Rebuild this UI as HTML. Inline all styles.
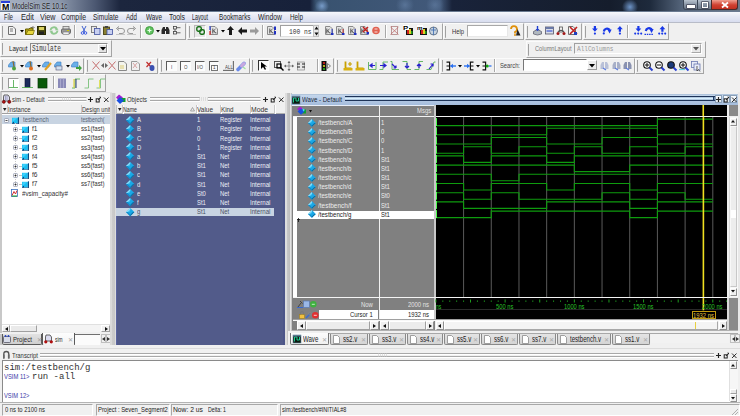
<!DOCTYPE html><html><head><meta charset="utf-8"><style>
html,body{margin:0;padding:0;width:740px;height:416px;overflow:hidden;background:#f0f0f0;}
div{position:absolute;box-sizing:border-box;}
.t{font-family:"Liberation Sans",sans-serif;white-space:nowrap;line-height:1;}
.m{font-family:"Liberation Mono",monospace;white-space:nowrap;line-height:1;}
svg{position:absolute;overflow:visible;}
</style></head><body>
<div style="left:0px;top:0px;width:740px;height:11px;background:radial-gradient(circle 7px at 322px 6px,rgba(140,180,230,0.75),rgba(140,180,230,0) 100%),radial-gradient(circle 8px at 630px 7px,rgba(130,175,235,0.8),rgba(130,175,235,0) 100%),radial-gradient(circle 9px at 405px 5px,rgba(120,150,190,0.45),rgba(120,150,190,0) 100%),radial-gradient(circle 9px at 435px 5px,rgba(120,150,190,0.4),rgba(120,150,190,0) 100%),linear-gradient(90deg,#a8b2c2 0.00%,#8a96aa 8.11%,#4c5872 12.84%,#1c263e 16.22%,#17213a 41.89%,#38526f 42.70%,#42597a 59.46%,#19233a 61.08%,#151d2c 82.43%,#1e2a3c 87.84%,#56667c 92.30%,#6a7888 100.00%);"></div>
<div style="left:0px;top:10.6px;width:740px;height:1px;background:#6a7a90;"></div>
<div style="left:1px;top:1px;width:9px;height:9px;background:#f4f4f4;border-top:2px solid #2a40d8;"></div>
<div class="t" style="left:1.80px;top:3.00px;font-size:8.64px;color:#000;transform:scaleX(1.028);transform-origin:0 0;font-weight:bold;">M</div>
<div class="t" style="left:11.50px;top:2.00px;font-size:8.424px;color:#222;transform:scaleX(0.750);transform-origin:0 0;text-shadow:0 0 2px #d0d8e4;">ModelSim SE 10.1c</div>
<div style="left:683px;top:0px;width:15px;height:10px;background:linear-gradient(#b8c2ce,#8a96a6 50%,#6c7888);border:1px solid #3c4656;border-top:none;border-radius:0 0 0 3px;"></div>
<div style="left:686.5px;top:5px;width:8px;height:2.5px;background:#fff;box-shadow:0 0 0 0.6px #334;"></div>
<div style="left:697px;top:0px;width:15px;height:10px;background:linear-gradient(#b8c2ce,#8a96a6 50%,#6c7888);border:1px solid #3c4656;border-top:none;"></div>
<div style="left:701.5px;top:2px;width:6.5px;height:6px;border:1.5px solid #fff;box-shadow:0 0 0 0.6px #334;"></div>
<div style="left:711px;top:0px;width:27px;height:10px;background:linear-gradient(#f0a090,#d04030 55%,#c03020);border:1px solid #4a2a2a;border-top:none;border-radius:0 0 3px 0;"></div>
<svg style="left:721px;top:2px" width="8" height="6" viewBox="0 0 8 6"><path d="M1,0.5 L7,5.5 M7,0.5 L1,5.5" stroke="#fff" stroke-width="1.8"/></svg>
<div style="left:0px;top:11.6px;width:740px;height:10.6px;background:linear-gradient(#f6f8fc,#e6e9f4 45%,#d8ddef);"></div>
<div style="left:0px;top:22.2px;width:740px;height:0.9px;background:#b8bcc8;"></div>
<div class="t" style="left:4.00px;top:14.00px;font-size:8.208px;color:#1e1e1e;transform:scaleX(0.680);transform-origin:0 0;">File</div>
<div class="t" style="left:21.00px;top:14.00px;font-size:8.208px;color:#1e1e1e;transform:scaleX(0.919);transform-origin:0 0;">Edit</div>
<div class="t" style="left:39.50px;top:14.00px;font-size:8.208px;color:#1e1e1e;transform:scaleX(0.879);transform-origin:0 0;">View</div>
<div class="t" style="left:61.00px;top:14.00px;font-size:8.208px;color:#1e1e1e;transform:scaleX(0.830);transform-origin:0 0;">Compile</div>
<div class="t" style="left:93.00px;top:14.00px;font-size:8.208px;color:#1e1e1e;transform:scaleX(0.799);transform-origin:0 0;">Simulate</div>
<div class="t" style="left:126.00px;top:14.00px;font-size:8.208px;color:#1e1e1e;transform:scaleX(0.753);transform-origin:0 0;">Add</div>
<div class="t" style="left:146.00px;top:14.00px;font-size:8.208px;color:#1e1e1e;transform:scaleX(0.774);transform-origin:0 0;">Wave</div>
<div class="t" style="left:169.00px;top:14.00px;font-size:8.208px;color:#1e1e1e;transform:scaleX(0.835);transform-origin:0 0;">Tools</div>
<div class="t" style="left:192.00px;top:14.00px;font-size:8.208px;color:#1e1e1e;transform:scaleX(0.649);transform-origin:0 0;">Layout</div>
<div class="t" style="left:219.00px;top:14.00px;font-size:8.208px;color:#1e1e1e;transform:scaleX(0.767);transform-origin:0 0;">Bookmarks</div>
<div class="t" style="left:258.00px;top:14.00px;font-size:8.208px;color:#1e1e1e;transform:scaleX(0.822);transform-origin:0 0;">Window</div>
<div class="t" style="left:290.00px;top:14.00px;font-size:8.208px;color:#1e1e1e;transform:scaleX(0.770);transform-origin:0 0;">Help</div>
<div style="left:0px;top:23.3px;width:186.3px;height:17.099999999999998px;border:1px solid #fbfbfb;border-right-color:#a4a4a4;border-bottom-color:#a4a4a4;"></div>
<div style="left:2px;top:25.8px;width:1.3px;height:12.599999999999998px;background:#a0a0a0;border-radius:0 0 0 1px;"></div>
<div style="left:187px;top:23.3px;width:255.5px;height:17.099999999999998px;border:1px solid #fbfbfb;border-right-color:#a4a4a4;border-bottom-color:#a4a4a4;"></div>
<div style="left:189px;top:25.8px;width:1.3px;height:12.599999999999998px;background:#a0a0a0;border-radius:0 0 0 1px;"></div>
<div style="left:443px;top:23.3px;width:81px;height:17.099999999999998px;border:1px solid #fbfbfb;border-right-color:#a4a4a4;border-bottom-color:#a4a4a4;"></div>
<div style="left:445px;top:25.8px;width:1.3px;height:12.599999999999998px;background:#a0a0a0;border-radius:0 0 0 1px;"></div>
<div style="left:524.5px;top:23.3px;width:57.200000000000045px;height:17.099999999999998px;border:1px solid #fbfbfb;border-right-color:#a4a4a4;border-bottom-color:#a4a4a4;"></div>
<div style="left:526.5px;top:25.8px;width:1.3px;height:12.599999999999998px;background:#a0a0a0;border-radius:0 0 0 1px;"></div>
<div style="left:582.5px;top:23.3px;width:86.0px;height:17.099999999999998px;border:1px solid #fbfbfb;border-right-color:#a4a4a4;border-bottom-color:#a4a4a4;"></div>
<div style="left:584.5px;top:25.8px;width:1.3px;height:12.599999999999998px;background:#a0a0a0;border-radius:0 0 0 1px;"></div>
<div style="left:0px;top:40.4px;width:112px;height:17.1px;border:1px solid #fbfbfb;border-right-color:#a4a4a4;border-bottom-color:#a4a4a4;"></div>
<div style="left:2px;top:42.9px;width:1.3px;height:12.600000000000001px;background:#a0a0a0;border-radius:0 0 0 1px;"></div>
<div style="left:526px;top:41px;width:180px;height:16.5px;border:1px solid #fbfbfb;border-right-color:#a4a4a4;border-bottom-color:#a4a4a4;"></div>
<div style="left:528px;top:43.5px;width:1.3px;height:12.0px;background:#a0a0a0;border-radius:0 0 0 1px;"></div>
<div style="left:0px;top:57.5px;width:83.8px;height:16.799999999999997px;border:1px solid #fbfbfb;border-right-color:#a4a4a4;border-bottom-color:#a4a4a4;"></div>
<div style="left:2px;top:60.0px;width:1.3px;height:12.299999999999997px;background:#a0a0a0;border-radius:0 0 0 1px;"></div>
<div style="left:84.5px;top:57.5px;width:73.30000000000001px;height:16.799999999999997px;border:1px solid #fbfbfb;border-right-color:#a4a4a4;border-bottom-color:#a4a4a4;"></div>
<div style="left:86.5px;top:60.0px;width:1.3px;height:12.299999999999997px;background:#a0a0a0;border-radius:0 0 0 1px;"></div>
<div style="left:158.5px;top:57.5px;width:91.0px;height:16.799999999999997px;border:1px solid #fbfbfb;border-right-color:#a4a4a4;border-bottom-color:#a4a4a4;"></div>
<div style="left:160.5px;top:60.0px;width:1.3px;height:12.299999999999997px;background:#a0a0a0;border-radius:0 0 0 1px;"></div>
<div style="left:250px;top:57.5px;width:84px;height:16.799999999999997px;border:1px solid #fbfbfb;border-right-color:#a4a4a4;border-bottom-color:#a4a4a4;"></div>
<div style="left:252px;top:60.0px;width:1.3px;height:12.299999999999997px;background:#a0a0a0;border-radius:0 0 0 1px;"></div>
<div style="left:334.5px;top:57.5px;width:104.5px;height:16.799999999999997px;border:1px solid #fbfbfb;border-right-color:#a4a4a4;border-bottom-color:#a4a4a4;"></div>
<div style="left:336.5px;top:60.0px;width:1.3px;height:12.299999999999997px;background:#a0a0a0;border-radius:0 0 0 1px;"></div>
<div style="left:439.5px;top:57.5px;width:195.0px;height:16.799999999999997px;border:1px solid #fbfbfb;border-right-color:#a4a4a4;border-bottom-color:#a4a4a4;"></div>
<div style="left:441.5px;top:60.0px;width:1.3px;height:12.299999999999997px;background:#a0a0a0;border-radius:0 0 0 1px;"></div>
<div style="left:635px;top:57.5px;width:69px;height:16.799999999999997px;border:1px solid #fbfbfb;border-right-color:#a4a4a4;border-bottom-color:#a4a4a4;"></div>
<div style="left:637px;top:60.0px;width:1.3px;height:12.299999999999997px;background:#a0a0a0;border-radius:0 0 0 1px;"></div>
<div style="left:0px;top:74.3px;width:105.8px;height:18.200000000000003px;border:1px solid #fbfbfb;border-right-color:#a4a4a4;border-bottom-color:#a4a4a4;"></div>
<div style="left:2px;top:76.8px;width:1.3px;height:13.700000000000003px;background:#a0a0a0;border-radius:0 0 0 1px;"></div>
<svg style="left:8px;top:26px" width="8" height="9" viewBox="0 0 8 9"><path d="M0.5,0.5 H5 L7.5,3 V8.5 H0.5 Z" fill="#f4f4f4" stroke="#707070" stroke-width="1"/></svg>
<svg style="left:10px;top:29px" width="4" height="4" viewBox="0 0 4 4"><path d="M0,0 H3 M0,2 H3" stroke="#555" stroke-width="0.8"/></svg>
<svg style="left:19.5px;top:30px" width="4" height="3" viewBox="0 0 4 3"><path d="M0,0 H4 L2,2.5 Z" fill="#000"/></svg>
<svg style="left:25px;top:26px" width="10" height="9" viewBox="0 0 10 9"><path d="M0.5,3 H4 L5,2 H8 V8.5 H0.5 Z" fill="#b0a018" stroke="#6a6000"/><path d="M1,8.5 L3,4.5 H9.5 L8,8.5 Z" fill="#e8d840" stroke="#6a6000" stroke-width="0.6"/><path d="M6,2 Q8,0 9.5,1.5" stroke="#444" fill="none" stroke-width="0.8"/></svg>
<svg style="left:37px;top:26px" width="9" height="9" viewBox="0 0 9 9"><rect x="0.5" y="0.5" width="8" height="8" fill="#4a4a10" stroke="#2a2a00"/><rect x="2" y="1" width="5" height="3" fill="#d8d060"/><rect x="2" y="5.5" width="5" height="3" fill="#222"/></svg>
<svg style="left:49px;top:26px" width="10" height="9" viewBox="0 0 10 9"><path d="M1.5,4.5 A3.5,3.5 0 0 1 8,3 M8.5,4.5 A3.5,3.5 0 0 1 2,6" stroke="#90c890" stroke-width="1.8" fill="none"/><path d="M6,1 L9.5,3.5 L6.5,4.5 Z M4,8 L0.5,5.5 L3.5,4.5 Z" fill="#90c890"/></svg>
<svg style="left:61px;top:26px" width="10" height="9" viewBox="0 0 10 9"><rect x="2" y="0.5" width="6" height="3" fill="#ddd" stroke="#777" stroke-width="0.8"/><rect x="0.5" y="3" width="9" height="4.5" rx="1" fill="#9a9a9a" stroke="#555" stroke-width="0.8"/><rect x="2" y="6" width="6" height="2.5" fill="#eee" stroke="#777" stroke-width="0.6"/><rect x="6" y="4" width="2" height="1" fill="#cc0"/></svg>
<div style="left:74px;top:25px;width:2px;height:13px;border-left:1px solid #a8a8a8;border-right:1px solid #fff;"></div>
<svg style="left:81px;top:26px" width="6" height="9" viewBox="0 0 6 9"><path d="M1,0 L4,6 M5,0 L2,6" stroke="#4060d0" stroke-width="1"/><circle cx="1.5" cy="7" r="1.3" fill="none" stroke="#3050e0" stroke-width="0.9"/><circle cx="4.5" cy="7" r="1.3" fill="none" stroke="#3050e0" stroke-width="0.9"/></svg>
<svg style="left:91px;top:26px" width="10" height="9" viewBox="0 0 10 9"><rect x="0.5" y="0.5" width="5" height="6" fill="#e8e8e8" stroke="#666" stroke-width="0.8"/><rect x="3.5" y="2.5" width="5.5" height="6" fill="#c8d0f0" stroke="#4050a0" stroke-width="0.8"/></svg>
<svg style="left:103px;top:26px" width="10" height="9" viewBox="0 0 10 9"><rect x="0.5" y="1" width="6" height="7.5" fill="#8a8030" stroke="#3a3400" stroke-width="0.8"/><rect x="2" y="0" width="3" height="2" fill="#444"/><rect x="4" y="3.5" width="5.5" height="5" fill="#c8d0f0" stroke="#4050a0" stroke-width="0.8"/></svg>
<svg style="left:116px;top:26px" width="9" height="9" viewBox="0 0 9 9"><path d="M3,7.5 H6 A2.5,2.5 0 0 0 6,2.5 H2" stroke="#999" stroke-width="1" fill="none"/><path d="M3,0.5 L0.5,2.5 L3,4.5" stroke="#888" fill="none" stroke-width="1"/><path d="M0,8.5 H9" stroke="#bbb" stroke-width="0.8"/></svg>
<svg style="left:127px;top:26px" width="9" height="9" viewBox="0 0 9 9"><path d="M6,7.5 H3 A2.5,2.5 0 0 1 3,2.5 H7" stroke="#999" stroke-width="1" fill="none"/><path d="M6,0.5 L8.5,2.5 L6,4.5" stroke="#888" fill="none" stroke-width="1"/><path d="M0,8.5 H9" stroke="#bbb" stroke-width="0.8"/></svg>
<div style="left:140px;top:25px;width:2px;height:13px;border-left:1px solid #a8a8a8;border-right:1px solid #fff;"></div>
<svg style="left:145px;top:26px" width="9" height="9" viewBox="0 0 9 9"><circle cx="4.5" cy="4.5" r="4" fill="#60c060" stroke="#389838" stroke-width="0.8"/><path d="M2.5,4.5 H6.5 M4.5,2.5 V6.5" stroke="#e8ffe8" stroke-width="1.2"/></svg>
<svg style="left:156px;top:30px" width="4" height="3" viewBox="0 0 4 3"><path d="M0,0 H4 L2,2.5 Z" fill="#000"/></svg>
<svg style="left:161px;top:26px" width="9" height="9" viewBox="0 0 9 9"><path d="M0.5,8 V4 L2,1 H4 V8 Z M8.5,8 V4 L7,1 H5 V8 Z" fill="#2a2a2a"/><rect x="3.5" y="3" width="2" height="2" fill="#2a2a2a"/></svg>
<svg style="left:173px;top:26px" width="8" height="9" viewBox="0 0 8 9"><rect x="0.5" y="0.5" width="3" height="2.5" fill="none" stroke="#444" stroke-width="0.8"/><rect x="0.5" y="5.5" width="3" height="2.5" fill="none" stroke="#444" stroke-width="0.8"/><path d="M3.5,1.7 H7.5 M3.5,6.8 H7.5 M2,3 V5.5" stroke="#444" stroke-width="0.8"/></svg>
<div style="left:194px;top:25px;width:12px;height:13px;border:1px solid #b8b8b8;border-right-color:#fff;border-bottom-color:#fff;background:#e8e8e8;"></div>
<svg style="left:196px;top:26px" width="9" height="9" viewBox="0 0 9 9"><rect x="0.8" y="0.8" width="4.5" height="4.5" rx="1.5" fill="none" stroke="#187018" stroke-width="1.4"/><rect x="3.8" y="3.8" width="4.5" height="4.5" rx="1.5" fill="none" stroke="#187018" stroke-width="1.4"/></svg>
<svg style="left:210px;top:26px" width="8" height="9" viewBox="0 0 8 9"><path d="M0.5,0.5 H5 L7.5,3 V8.5 H0.5 Z" fill="#e4e4e4" stroke="#8a8a8a" stroke-width="1"/></svg>
<svg style="left:211.5px;top:27.5px" width="5" height="6" viewBox="0 0 5 6"><path d="M0.8,0.5 V5.5 M0.8,3.5 L3.5,1 M1.8,2.8 L4,5.5" stroke="#333" stroke-width="0.8" fill="none"/><path d="M2.5,4.5 H4.5" stroke="#666" stroke-width="0.6"/></svg>
<svg style="left:208px;top:26px" width="4" height="9" viewBox="0 0 4 9"><path d="M2,0 V4" stroke="#3040d0" stroke-width="1.2"/><path d="M2,5 V9" stroke="#d02020" stroke-width="1.2"/></svg>
<svg style="left:220.5px;top:30px" width="4" height="3" viewBox="0 0 4 3"><path d="M0,0 H4 L2,2.5 Z" fill="#000"/></svg>
<svg style="left:227px;top:26px" width="7" height="9" viewBox="0 0 7 9"><path d="M3.5,0 L7,4 H5 V9 H2 V4 H0 Z" fill="#1a1a1a"/></svg>
<svg style="left:238px;top:26.5px" width="9" height="8" viewBox="0 0 9 8"><path d="M0,4 L4,0 V2.5 H9 V5.5 H4 V8 Z" fill="#1a1a1a"/></svg>
<svg style="left:249.5px;top:26.5px" width="9" height="8" viewBox="0 0 9 8"><path d="M9,4 L5,0 V2.5 H0 V5.5 H5 V8 Z" fill="#9a9a9a"/></svg>
<div style="left:262px;top:25px;width:2px;height:13px;border-left:1px solid #a8a8a8;border-right:1px solid #fff;"></div>
<svg style="left:267px;top:26px" width="8" height="9" viewBox="0 0 8 9"><path d="M0.5,0.5 H5 L7.5,3 V8.5 H0.5 Z" fill="#e4e4e4" stroke="#8a8a8a" stroke-width="1"/></svg>
<svg style="left:268.5px;top:27.5px" width="5" height="6" viewBox="0 0 5 6"><path d="M0.8,0.5 V5.5 M0.8,3.5 L3.5,1 M1.8,2.8 L4,5.5" stroke="#333" stroke-width="0.8" fill="none"/><path d="M2.5,4.5 H4.5" stroke="#666" stroke-width="0.6"/></svg>
<svg style="left:274px;top:26px" width="3" height="9" viewBox="0 0 3 9"><rect x="0" y="0.5" width="2" height="3.5" fill="#2030c0"/><rect x="0" y="5" width="2" height="3.5" fill="#2030c0"/></svg>
<div style="left:280px;top:25px;width:33px;height:12px;background:#fff;border:1px solid #a0a0a0;border-right:none;border-bottom-color:#e0e0e0;"></div>
<div class="m" style="left:288.92px;top:30.00px;font-size:6.6px;color:#333;transform:scaleX(0.950);transform-origin:0 0;">100 ns</div>
<div style="left:313px;top:25px;width:6px;height:12px;background:#e8e8e8;border:1px solid #c0c0c0;"></div>
<svg style="left:313.5px;top:26px" width="5" height="10" viewBox="0 0 5 10"><path d="M2.5,0.5 L4.5,3.5 H0.5 Z M2.5,9.5 L4.5,6.5 H0.5 Z" fill="#111"/></svg>
<svg style="left:324.5px;top:26px" width="8" height="9" viewBox="0 0 8 9"><path d="M0.5,0.5 H5 L7.5,3 V8.5 H0.5 Z" fill="#e4e4e4" stroke="#8a8a8a" stroke-width="1"/></svg>
<svg style="left:326.0px;top:27.5px" width="5" height="6" viewBox="0 0 5 6"><path d="M0.8,0.5 V5.5 M0.8,3.5 L3.5,1 M1.8,2.8 L4,5.5" stroke="#333" stroke-width="0.8" fill="none"/><path d="M2.5,4.5 H4.5" stroke="#666" stroke-width="0.6"/></svg>
<svg style="left:330.5px;top:29px" width="3" height="6" viewBox="0 0 3 6"><path d="M1,0 V4" stroke="#2030c0" stroke-width="0.9"/><rect x="0" y="4" width="2.5" height="2" fill="#2030c0"/></svg>
<svg style="left:336px;top:26px" width="8" height="9" viewBox="0 0 8 9"><path d="M0.5,0.5 H5 L7.5,3 V8.5 H0.5 Z" fill="#e4e4e4" stroke="#8a8a8a" stroke-width="1"/></svg>
<svg style="left:337.5px;top:27.5px" width="5" height="6" viewBox="0 0 5 6"><path d="M0.8,0.5 V5.5 M0.8,3.5 L3.5,1 M1.8,2.8 L4,5.5" stroke="#333" stroke-width="0.8" fill="none"/><path d="M2.5,4.5 H4.5" stroke="#666" stroke-width="0.6"/></svg>
<svg style="left:342px;top:29px" width="3" height="6" viewBox="0 0 3 6"><path d="M1,0 V4" stroke="#c02020" stroke-width="0.9"/><rect x="0" y="4" width="2.5" height="2" fill="#2030c0"/></svg>
<svg style="left:348px;top:26px" width="8" height="9" viewBox="0 0 8 9"><path d="M0.5,0.5 H5 L7.5,3 V8.5 H0.5 Z" fill="#e4e4e4" stroke="#8a8a8a" stroke-width="1"/></svg>
<svg style="left:349.5px;top:27.5px" width="5" height="6" viewBox="0 0 5 6"><path d="M0.8,0.5 V5.5 M0.8,3.5 L3.5,1 M1.8,2.8 L4,5.5" stroke="#333" stroke-width="0.8" fill="none"/><path d="M2.5,4.5 H4.5" stroke="#666" stroke-width="0.6"/></svg>
<svg style="left:354px;top:29px" width="3" height="6" viewBox="0 0 3 6"><path d="M1,0 V4" stroke="#2030c0" stroke-width="0.9"/><rect x="0" y="4" width="2.5" height="2" fill="#2030c0"/></svg>
<svg style="left:359.5px;top:26px" width="8" height="9" viewBox="0 0 8 9"><path d="M0.5,0.5 H5 L7.5,3 V8.5 H0.5 Z" fill="#e4e4e4" stroke="#8a8a8a" stroke-width="1"/></svg>
<svg style="left:361px;top:27.5px" width="5" height="6" viewBox="0 0 5 6"><path d="M0.8,0.5 V5.5 M0.8,3.5 L3.5,1 M1.8,2.8 L4,5.5" stroke="#333" stroke-width="0.8" fill="none"/><path d="M2.5,4.5 H4.5" stroke="#666" stroke-width="0.6"/></svg>
<svg style="left:361px;top:26px" width="9" height="9" viewBox="0 0 9 9"><path d="M2,1 L7,6 M7,1 L2,6" stroke="#c02020" stroke-width="1.5"/><rect x="5.5" y="6" width="2.5" height="2.5" fill="#2030c0"/></svg>
<svg style="left:372px;top:26px" width="8" height="9" viewBox="0 0 8 9"><circle cx="4" cy="4.5" r="3.8" fill="#e06050"/><path d="M2.5,3 H5.5 M2.5,6 H5.5" stroke="#fff" stroke-width="0.8"/></svg>
<div style="left:385px;top:25px;width:2px;height:13px;border-left:1px solid #a8a8a8;border-right:1px solid #fff;"></div>
<svg style="left:390px;top:26px" width="9" height="9" viewBox="0 0 9 9"><rect x="1.5" y="0.5" width="6" height="8" fill="none" stroke="#b08080" stroke-width="0.8"/><path d="M0.5,1 L8.5,8.5 M8.5,1 L0.5,8.5" stroke="#c07070" stroke-width="0.8"/></svg>
<svg style="left:403px;top:25px" width="10" height="10" viewBox="0 0 10 10"><rect x="3" y="3" width="7" height="7" fill="#111"/><rect x="4" y="5" width="2" height="4" fill="#d02020"/><rect x="6" y="4" width="2" height="5" fill="#e0d020"/><rect x="8" y="6" width="1.5" height="3" fill="#20a020"/><rect x="0" y="0" width="6" height="5" fill="#fff"/></svg>
<div class="t" style="left:403.30px;top:26.00px;font-size:5.4px;color:#000;transform:scaleX(1.444);transform-origin:0 0;font-weight:bold;">P</div>
<svg style="left:417px;top:25px" width="10" height="10" viewBox="0 0 10 10"><rect x="3" y="3" width="7" height="7" fill="#111"/><rect x="4" y="5" width="2" height="4" fill="#d02020"/><rect x="6" y="4" width="2" height="5" fill="#e0d020"/><rect x="8" y="6" width="1.5" height="3" fill="#20a020"/><rect x="0" y="0" width="6" height="5" fill="#fff"/></svg>
<div class="t" style="left:417.30px;top:26.00px;font-size:5.4px;color:#000;transform:scaleX(1.156);transform-origin:0 0;font-weight:bold;">m</div>
<svg style="left:429px;top:26px" width="9" height="10" viewBox="0 0 9 10"><circle cx="4.5" cy="5" r="4" fill="#c8d4e0" stroke="#5a6a80" stroke-width="0.9"/><path d="M2,4 H7 M4.5,1 V9" stroke="#3a6ab0" stroke-width="0.8"/></svg>
<div class="t" style="left:452.00px;top:28.00px;font-size:8.100000000000001px;color:#333;transform:scaleX(0.720);transform-origin:0 0;">Help</div>
<div style="left:467px;top:25px;width:41px;height:12px;background:#fff;border:1px solid #e8e8e8;border-top-color:#a8a8a8;border-left-color:#a8a8a8;"></div>
<svg style="left:510px;top:25.5px" width="11" height="10" viewBox="0 0 11 10"><path d="M1,3 A3,3 0 1 1 5,6 V7.5" stroke="#e0900a" stroke-width="1.8" fill="none"/><circle cx="5" cy="9" r="1" fill="#e0900a"/><path d="M6,9.5 L7.5,3 L10.5,9.5 Z" fill="#222"/></svg>
<svg style="left:533px;top:26px" width="9" height="9" viewBox="0 0 9 9"><path d="M0.5,5.5 L4.5,3.5 L8.5,5.5 V8 L4.5,9 L0.5,8 Z" fill="#b0b8c0" stroke="#556" stroke-width="0.7"/><path d="M4.5,0 V4.5" stroke="#2040d0" stroke-width="1.4"/><path d="M2.5,3 L4.5,5 L6.5,3" fill="#2040d0"/></svg>
<svg style="left:545px;top:26px" width="9" height="9" viewBox="0 0 9 9"><rect x="0.5" y="1" width="8" height="7" fill="#d8dce8" stroke="#556" stroke-width="0.8"/><rect x="0.5" y="1" width="8" height="2" fill="#6a7aa8"/><path d="M1.5,5 H7.5" stroke="#2040d0" stroke-width="1"/></svg>
<svg style="left:556px;top:26px" width="10" height="9" viewBox="0 0 10 9"><path d="M2,6 A3.5,3.5 0 0 1 8,6" stroke="#555" stroke-width="1.3" fill="none"/><rect x="3.5" y="1" width="3" height="5" fill="none" stroke="#555" stroke-width="0.8"/><circle cx="2" cy="7.5" r="1.5" fill="#a01818"/><circle cx="8" cy="7.5" r="1.5" fill="#a01818"/></svg>
<svg style="left:568px;top:26px" width="8" height="9" viewBox="0 0 8 9"><path d="M0.5,0.5 H5 L7.5,3 V8.5 H0.5 Z" fill="#f4f4f4" stroke="#707070" stroke-width="1"/></svg>
<svg style="left:568px;top:26px" width="10" height="9" viewBox="0 0 10 9"><path d="M2,1 L9,8 M9,1 L2,8" stroke="#c02020" stroke-width="1.6"/><rect x="6" y="6" width="3" height="3" fill="#2040c0"/></svg>
<svg style="left:592px;top:26px" width="6" height="9" viewBox="0 0 6 9"><path d="M1.8,0 H4 V2.6 H5.8 L2.9,5.8 L0,2.6 H1.8 Z" fill="#1838e8"/><circle cx="2.9" cy="7.6" r="1.1" fill="#1838e8"/></svg>
<svg style="left:602px;top:26px" width="10" height="9" viewBox="0 0 10 9"><path d="M1.8,5.5 A3.3,3.3 0 0 1 7.6,3.8" stroke="#1838e8" stroke-width="2.2" fill="none"/><path d="M5.2,3.2 L9.6,3.6 L7.6,7.4 Z" fill="#1838e8"/><circle cx="1.8" cy="7.4" r="1.1" fill="#1838e8"/></svg>
<svg style="left:617px;top:26px" width="6" height="9" viewBox="0 0 6 9"><path d="M2.9,0 L5.8,3.2 H4 V5.8 H1.8 V3.2 H0 Z" fill="#1838e8"/><circle cx="2.9" cy="7.6" r="1.1" fill="#1838e8"/></svg>
<div style="left:627px;top:25px;width:2px;height:13px;border-left:1px solid #a8a8a8;border-right:1px solid #fff;"></div>
<svg style="left:633.5px;top:26px" width="9" height="9" viewBox="0 0 9 9"><path transform="translate(1.5,0)" d="M1.8,0 H4 V2.6 H5.8 L2.9,5.8 L0,2.6 H1.8 Z" fill="#1838e8"/><circle cx="1.2" cy="7.6" r="1.05" fill="#1838e8"/><circle cx="4.2" cy="7.6" r="1.05" fill="#1838e8"/><circle cx="7.2" cy="7.6" r="1.05" fill="#1838e8"/></svg>
<svg style="left:644px;top:26px" width="10" height="9" viewBox="0 0 10 9"><path d="M1.8,5 A3.3,3.3 0 0 1 7.6,3.3" stroke="#1838e8" stroke-width="2.2" fill="none"/><path d="M5.2,2.7 L9.6,3.1 L7.6,6.9 Z" fill="#1838e8"/><path d="M0.5,8.3 H9" stroke="#1838e8" stroke-width="1.3" stroke-dasharray="1.5,0.8"/></svg>
<svg style="left:657.5px;top:26px" width="9" height="9" viewBox="0 0 9 9"><path transform="translate(1.5,0)" d="M2.9,0 L5.8,3.2 H4 V5.8 H1.8 V3.2 H0 Z" fill="#1838e8"/><circle cx="1.2" cy="7.6" r="1.05" fill="#1838e8"/><circle cx="4.2" cy="7.6" r="1.05" fill="#1838e8"/><circle cx="7.2" cy="7.6" r="1.05" fill="#1838e8"/></svg>
<div class="t" style="left:9.00px;top:45.00px;font-size:8.100000000000001px;color:#222;transform:scaleX(0.761);transform-origin:0 0;">Layout</div>
<div style="left:30px;top:43px;width:78px;height:11px;background:#f0f0f0;border:1px solid #fff;border-top-color:#8a8a8a;border-left-color:#8a8a8a;"></div>
<div class="m" style="left:32.00px;top:45.00px;font-size:8.2px;color:#3a3a3a;transform:scaleX(0.737);transform-origin:0 0;">Simulate</div>
<div style="left:98px;top:44px;width:9px;height:9px;background:#e4e4e4;border:1px solid #fff;border-right-color:#909090;border-bottom-color:#909090;"></div>
<svg style="left:99.5px;top:47px" width="6" height="4" viewBox="0 0 6 4"><path d="M0,0 H6 L3,3.5 Z" fill="#000"/></svg>
<div class="t" style="left:534.50px;top:45.00px;font-size:7.5600000000000005px;color:#777;transform:scaleX(0.749);transform-origin:0 0;">ColumnLayout</div>
<div style="left:574px;top:43px;width:128px;height:11px;background:#f0f0f0;border:1px solid #fff;border-top-color:#a0a0a0;border-left-color:#a0a0a0;"></div>
<div class="m" style="left:576.50px;top:45.00px;font-size:8px;color:#999;transform:scaleX(0.760);transform-origin:0 0;">AllColumns</div>
<div style="left:691px;top:44px;width:10px;height:9px;background:#e8e8e8;border:1px solid #fff;border-right-color:#a8a8a8;border-bottom-color:#a8a8a8;"></div>
<svg style="left:693px;top:47px" width="6" height="4" viewBox="0 0 6 4"><path d="M0,0 H6 L3,3.5 Z" fill="#555"/></svg>
<svg style="left:8px;top:61px" width="11" height="10" viewBox="0 0 11 10"><path d="M0.5,4 L3,1 H7 V6 H0.5 Z" fill="#6ab0e8" stroke="#3a7ac0" stroke-width="0.6"/><path d="M5,0 L6,6" stroke="#8a6a30" stroke-width="1.2"/><circle cx="6" cy="7.5" r="2" fill="#50a040"/></svg>
<svg style="left:20px;top:65px" width="4" height="3" viewBox="0 0 4 3"><path d="M0,0 H4 L2,2.5 Z" fill="#000"/></svg>
<svg style="left:25px;top:61px" width="11" height="10" viewBox="0 0 11 10"><path d="M0.5,4 L3,1 H7 V6 H0.5 Z" fill="#6ab0e8" stroke="#3a7ac0" stroke-width="0.6"/><path d="M5,0 L6,6" stroke="#8a6a30" stroke-width="1.2"/><circle cx="6" cy="7.5" r="2" fill="#e07020"/></svg>
<svg style="left:37px;top:65px" width="4" height="3" viewBox="0 0 4 3"><path d="M0,0 H4 L2,2.5 Z" fill="#000"/></svg>
<svg style="left:42px;top:61px" width="10" height="10" viewBox="0 0 10 10"><path d="M0.5,4 L3,1 H7 V6 H0.5 Z" fill="#6ab0e8" stroke="#3a7ac0" stroke-width="0.6"/><path d="M3,9 L9,2" stroke="#e0a020" stroke-width="2"/></svg>
<svg style="left:54px;top:61px" width="10" height="10" viewBox="0 0 10 10"><path d="M0.5,4 L3,1 H7 V6 H0.5 Z" fill="#6ab0e8" stroke="#3a7ac0" stroke-width="0.6"/><rect x="2" y="5" width="6" height="4" fill="#d0e0f0" stroke="#557" stroke-width="0.6"/></svg>
<svg style="left:66px;top:65px" width="4" height="3" viewBox="0 0 4 3"><path d="M0,0 H4 L2,2.5 Z" fill="#000"/></svg>
<svg style="left:71px;top:61px" width="11" height="10" viewBox="0 0 11 10"><path d="M0.5,4 L3,1 H7 V6 H0.5 Z" fill="#6ab0e8" stroke="#3a7ac0" stroke-width="0.6"/><path d="M5,6 H8 V4 L11,7 L8,10 V8 H5 Z" fill="#40a040"/></svg>
<svg style="left:92px;top:61px" width="8" height="9" viewBox="0 0 8 9"><path d="M0.5,0.5 L4,4.5 L0.5,8.5 M7.5,0.5 L4,4.5 L7.5,8.5" stroke="#c06060" stroke-width="0.9" fill="none"/></svg>
<svg style="left:101px;top:63px" width="3" height="5" viewBox="0 0 3 5"><path d="M3,0 L0,2.5 L3,5 Z" fill="#666"/></svg>
<svg style="left:105px;top:63px" width="3" height="5" viewBox="0 0 3 5"><path d="M0,0 L3,2.5 L0,5 Z" fill="#666"/></svg>
<svg style="left:108px;top:61px" width="8" height="9" viewBox="0 0 8 9"><path d="M0.5,0.5 L4,4.5 L0.5,8.5 M7.5,0.5 L4,4.5 L7.5,8.5" stroke="#c06060" stroke-width="0.9" fill="none"/></svg>
<svg style="left:118px;top:61px" width="9" height="10" viewBox="0 0 9 10"><path d="M0.5,0.5 H6 L8.5,3 V9.5 H0.5 Z" fill="#f4f4ec" stroke="#888" stroke-width="1"/></svg>
<svg style="left:120px;top:65px" width="5" height="5" viewBox="0 0 5 5"><rect x="0" y="0" width="4" height="4" fill="#e8e0b0"/></svg>
<svg style="left:131px;top:61px" width="9" height="10" viewBox="0 0 9 10"><path d="M0.5,0.5 H6 L8.5,3 V9.5 H0.5 Z" fill="#f0f0f0" stroke="#999" stroke-width="1"/></svg>
<svg style="left:133px;top:63px" width="5" height="6" viewBox="0 0 5 6"><path d="M0,0 L4,5 M4,0 L0,5" stroke="#d09090" stroke-width="0.8"/></svg>
<svg style="left:146px;top:61px" width="9" height="10" viewBox="0 0 9 10"><path d="M0.5,1 L5,6 M5,1 L0.5,6" stroke="#c03030" stroke-width="1.2"/><ellipse cx="6" cy="7" rx="2.5" ry="3" fill="#3a50b0"/></svg>
<div style="left:166px;top:60.8px;width:10.5px;height:10.3px;border:1px solid #fcfcfc;border-top-color:#5a5a5a;border-left-color:#5a5a5a;background:#fbfbfb;"></div>
<div class="t" style="left:170.72px;top:66.00px;font-size:4.968px;color:#444;transform:scaleX(0.900);transform-origin:0 0;">I</div>
<div style="left:180px;top:60.8px;width:10.5px;height:10.3px;border:1px solid #fcfcfc;border-top-color:#5a5a5a;border-left-color:#5a5a5a;background:#fbfbfb;"></div>
<div class="t" style="left:183.69px;top:66.00px;font-size:4.968px;color:#444;transform:scaleX(0.900);transform-origin:0 0;">O</div>
<div style="left:194.5px;top:60.8px;width:10.5px;height:10.3px;border:1px solid #fcfcfc;border-top-color:#5a5a5a;border-left-color:#5a5a5a;background:#fbfbfb;"></div>
<div class="t" style="left:197.04px;top:66.00px;font-size:4.968px;color:#444;transform:scaleX(0.900);transform-origin:0 0;">I/O</div>
<div style="left:208.5px;top:60.8px;width:10.5px;height:10.3px;border:1px solid #fcfcfc;border-top-color:#5a5a5a;border-left-color:#5a5a5a;background:#fbfbfb;"></div>
<div style="left:210.5px;top:64.5px;width:7.3px;height:6.1px;border:0.8px solid #777;"></div>
<div class="t" style="left:212.65px;top:66.00px;font-size:4.968px;color:#444;transform:scaleX(0.900);transform-origin:0 0;">1</div>
<div style="left:223px;top:61px;width:10.5px;height:10px;border-right:1px solid #707070;border-bottom:1px solid #707070;box-shadow:inset -1px -1px 0 #d8d8d8;"></div>
<div class="t" style="left:224.62px;top:66.00px;font-size:4.968px;color:#444;transform:scaleX(0.900);transform-origin:0 0;">ALL</div>
<svg style="left:236px;top:61px" width="10" height="10" viewBox="0 0 10 10"><path d="M2,8.5 L8,2.5" stroke="#6a8ae8" stroke-width="3.6" stroke-linecap="round"/><path d="M5.5,5 L8,2.5" stroke="#c8a8e0" stroke-width="3" stroke-linecap="round"/><path d="M7,6 L9.5,8" stroke="#a0e0a0" stroke-width="1.2"/></svg>
<div style="left:258px;top:60px;width:11px;height:11px;border:1px solid #333;border-right-color:#fff;border-bottom-color:#fff;background:#fafafa;"></div>
<svg style="left:260px;top:62px" width="7" height="8" viewBox="0 0 7 8"><path d="M1,0 V7 L3,5 L5,8 L6,7 L4.5,4.5 H7 Z" fill="#000"/></svg>
<svg style="left:274px;top:61px" width="10" height="10" viewBox="0 0 10 10"><rect x="0.5" y="0.5" width="6" height="6" fill="none" stroke="#444" stroke-width="0.9"/><rect x="3" y="3" width="4" height="4" fill="none" stroke="#000" stroke-width="1.2"/><path d="M6,6 L9.5,9.5" stroke="#000" stroke-width="1.4"/></svg>
<svg style="left:284px;top:61px" width="10" height="10" viewBox="0 0 10 10"><path d="M5,0.5 V9.5 M0.5,5 H9.5" stroke="#888" stroke-width="0.9"/><path d="M5,0 L3.5,2 H6.5 Z M5,10 L3.5,8 H6.5 Z M0,5 L2,3.5 V6.5 Z M10,5 L8,3.5 V6.5 Z" fill="#666"/></svg>
<svg style="left:296px;top:61px" width="10" height="10" viewBox="0 0 10 10"><rect x="1.5" y="1" width="7" height="8" fill="#e8e8e8" stroke="#888" stroke-width="0.7"/><path d="M1,3 H4 M1,6 H4 M6,3 H9 M6,6 H9" stroke="#222" stroke-width="1"/></svg>
<div style="left:317px;top:59px;width:2px;height:13px;border-left:1px solid #a8a8a8;border-right:1px solid #fff;"></div>
<svg style="left:321px;top:60.5px" width="10" height="10" viewBox="0 0 10 10"><rect x="0.5" y="0" width="5" height="10" fill="#111"/><circle cx="3" cy="2" r="1.1" fill="#e02020"/><circle cx="3" cy="5" r="1.1" fill="#e0d020"/><circle cx="3" cy="8" r="1.1" fill="#20c020"/><path d="M6.5,2.5 L9.5,5 L6.5,7.5 Z" fill="none" stroke="#666" stroke-width="0.8"/></svg>
<svg style="left:343px;top:61px" width="10" height="10" viewBox="0 0 10 10"><path d="M2.5,0.5 V7.5 H8.5" stroke="#c8a000" stroke-width="1.8" fill="none"/><rect x="0.5" y="7" width="9" height="2.5" fill="#d8b010"/><path d="M5,3 H9 M7,1 V5" stroke="#c8a000" stroke-width="1.2"/></svg>
<svg style="left:355px;top:61px" width="10" height="10" viewBox="0 0 10 10"><path d="M2.5,0.5 V7.5 H8.5" stroke="#c8a000" stroke-width="1.8" fill="none"/><rect x="0.5" y="7" width="9" height="2.5" fill="#d8b010"/></svg>
<svg style="left:367px;top:61px" width="10" height="10" viewBox="0 0 10 10"><path d="M1.5,1 V8.5 H6 M9,1 V8.5 H6" stroke="#58b058" stroke-width="0.9" fill="none"/><path d="M3,4.5 H8 M3,4.5 L5,3 V6 Z" stroke="#2a20d0" fill="#2a20d0" stroke-width="1.2"/></svg>
<svg style="left:379px;top:61px" width="10" height="10" viewBox="0 0 10 10"><path d="M0.5,8.5 H4 V1 H9" stroke="#58b058" stroke-width="0.9" fill="none"/><path d="M1,4.5 H7 M7,4.5 L5,3 V6 Z" stroke="#2a20d0" fill="#2a20d0" stroke-width="1.2"/></svg>
<svg style="left:390px;top:61px" width="10" height="10" viewBox="0 0 10 10"><path d="M0.5,0.5 H2 V8.5 H9" stroke="#58b058" stroke-width="0.9" fill="none"/><path d="M2,3 L6,7 M6,7 H3.5 M6,7 V4.5" stroke="#2a20d0" stroke-width="1.2" fill="none"/></svg>
<svg style="left:402px;top:61px" width="10" height="10" viewBox="0 0 10 10"><path d="M0.5,0.5 H5 V8.5 H9" stroke="#58b058" stroke-width="0.9" fill="none"/><path d="M5,2 V7 M5,7 L3,5 M5,7 L7,5" stroke="#2a20d0" stroke-width="1.2" fill="none"/></svg>
<svg style="left:414px;top:61px" width="10" height="10" viewBox="0 0 10 10"><path d="M0.5,8.5 H5 V0.5 H9" stroke="#58b058" stroke-width="0.9" fill="none"/><path d="M5,3 V7 M5,3 L3,5 M5,3 L7,5" stroke="#2a20d0" stroke-width="1.2" fill="none"/></svg>
<svg style="left:426px;top:61px" width="10" height="10" viewBox="0 0 10 10"><path d="M0.5,8.5 H5 L8,1 H9.5" stroke="#58b058" stroke-width="0.9" fill="none"/><path d="M3,8 L7,3 M7,3 H4.5 M7,3 V5.5" stroke="#2a20d0" stroke-width="1.2" fill="none"/></svg>
<svg style="left:446px;top:61px" width="10" height="10" viewBox="0 0 10 10"><path d="M0.5,1.2 H3.6 V8.8 H0.5 M0.5,5 H3.6" stroke="#111" stroke-width="1.2" fill="none"/><path d="M4.5,5 H10" stroke="#2a70f0" stroke-width="1.4"/><path d="M4,5 L7,2.8 V7.2 Z" fill="#2a70f0"/></svg>
<svg style="left:458px;top:65px" width="4" height="3" viewBox="0 0 4 3"><path d="M0,0 H4 L2,2.5 Z" fill="#000"/></svg>
<svg style="left:464px;top:61px" width="10" height="10" viewBox="0 0 10 10"><path d="M9.5,1.2 H6.4 V8.8 H9.5 M9.5,5 H6.4" stroke="#111" stroke-width="1.2" fill="none"/><path d="M0,5 H5.5" stroke="#2a70f0" stroke-width="1.4"/><path d="M6,5 L3,2.8 V7.2 Z" fill="#2a70f0"/></svg>
<svg style="left:476px;top:65px" width="4" height="3" viewBox="0 0 4 3"><path d="M0,0 H4 L2,2.5 Z" fill="#000"/></svg>
<svg style="left:482px;top:61px" width="10" height="10" viewBox="0 0 10 10"><path d="M0.5,1.2 H3.6 V8.8 H0.5 M0.5,5 H3.6" stroke="#111" stroke-width="1.2" fill="none"/><circle cx="5.2" cy="5" r="1.6" fill="#10a010"/><path d="M7,5 H9.5" stroke="#2a70f0" stroke-width="1.3"/></svg>
<div style="left:494px;top:59px;width:2px;height:13px;border-left:1px solid #a8a8a8;border-right:1px solid #fff;"></div>
<div class="t" style="left:500.00px;top:62.00px;font-size:7.884px;color:#444;transform:scaleX(0.736);transform-origin:0 0;">Search:</div>
<div style="left:523px;top:59px;width:64px;height:12px;background:#fff;border:1px solid #fff;border-top-color:#777;border-left-color:#777;"></div>
<div style="left:587px;top:60px;width:10px;height:10px;background:#ececec;border:1px solid #fff;border-right-color:#999;border-bottom-color:#999;"></div>
<svg style="left:589px;top:64px" width="6" height="4" viewBox="0 0 6 4"><path d="M0,0 H6 L3,3.5 Z" fill="#000"/></svg>
<svg style="left:600px;top:61px" width="10" height="10" viewBox="0 0 10 10"><path d="M0.5,8 V4 L2,1 H4 V8 Z M8.5,8 V4 L7,1 H5 V8 Z" fill="#b8c0d8"/><path d="M3,7 L6,9" stroke="#5a7ae0" stroke-width="1.2"/></svg>
<svg style="left:612px;top:61px" width="10" height="10" viewBox="0 0 10 10"><path d="M0.5,8 V4 L2,1 H4 V8 Z M8.5,8 V4 L7,1 H5 V8 Z" fill="#a8b0c8"/><path d="M3,7 L6,9" stroke="#5a7ae0" stroke-width="1.2"/></svg>
<svg style="left:623px;top:61px" width="10" height="10" viewBox="0 0 10 10"><path d="M0.5,8 V4 L2,1 H4 V8 Z M8.5,8 V4 L7,1 H5 V8 Z" fill="#8a92b0"/><path d="M3,7 L6,9" stroke="#5a7ae0" stroke-width="1.2"/></svg>
<svg style="left:643px;top:61px" width="10" height="10" viewBox="0 0 10 10"><circle cx="4" cy="4" r="3.3" fill="#fff" stroke="#111" stroke-width="1.1"/><path d="M2,4 H6 M4,2 V6" stroke="#111" stroke-width="1"/><path d="M6.5,6.5 L9.5,9.5" stroke="#2a40d0" stroke-width="2"/></svg>
<svg style="left:655px;top:61px" width="10" height="10" viewBox="0 0 10 10"><circle cx="4" cy="4" r="3.3" fill="#fff" stroke="#111" stroke-width="1.1"/><path d="M2,4 H6" stroke="#111" stroke-width="1"/><path d="M6.5,6.5 L9.5,9.5" stroke="#2a40d0" stroke-width="2"/></svg>
<svg style="left:667px;top:61px" width="10" height="10" viewBox="0 0 10 10"><circle cx="4" cy="4" r="3.3" fill="#1a3a7a" stroke="#111" stroke-width="1.1"/><path d="M6.5,6.5 L9.5,9.5" stroke="#2a40d0" stroke-width="2"/></svg>
<svg style="left:679px;top:61px" width="10" height="10" viewBox="0 0 10 10"><circle cx="4" cy="4" r="3.3" fill="#fff" stroke="#111" stroke-width="1.1"/><path d="M2,4 H6 M4,2 V6" stroke="#111" stroke-width="1"/><path d="M6.5,6.5 L9.5,9.5" stroke="#2a40d0" stroke-width="2"/><path d="M0,8.5 H6" stroke="#60d0e0" stroke-width="1.2"/></svg>
<svg style="left:691px;top:61px" width="11" height="10" viewBox="0 0 11 10"><rect x="0.5" y="0.5" width="6" height="6" fill="#e8ecf8" stroke="#6a78b0" stroke-width="0.8"/><rect x="3" y="3" width="6" height="6" fill="#e8ecf8" stroke="#6a78b0" stroke-width="0.8"/><path d="M6,5 V10 L7.5,8.5 L9,10.5" stroke="#333" stroke-width="0.8" fill="#fff"/></svg>
<div style="left:8px;top:78px;width:11px;height:11px;border:1px solid #999;border-right-color:#fff;border-bottom-color:#fff;background:#fff;"></div>
<svg style="left:9px;top:79px" width="9" height="9" viewBox="0 0 9 9"><path d="M4.5,1 V8.5 M0,8.5 H9" stroke="#58b058" stroke-width="0.9"/></svg>
<svg style="left:22px;top:78px" width="11" height="11" viewBox="0 0 11 11"><rect x="3" y="0.5" width="5" height="9" fill="#1a2a5a" stroke="#0a1030" stroke-width="0.6"/><path d="M0,9.5 H11" stroke="#58b058" stroke-width="0.9"/></svg>
<svg style="left:37px;top:78px" width="11" height="11" viewBox="0 0 11 11"><rect x="1" y="0.5" width="9" height="9.5" fill="#0a5a0a" stroke="#063806" stroke-width="0.7"/></svg>
<div style="left:53px;top:76px;width:2px;height:13px;border-left:1px solid #a8a8a8;border-right:1px solid #fff;"></div>
<svg style="left:57px;top:78px" width="10" height="11" viewBox="0 0 10 11"><rect x="1" y="0.5" width="8" height="9.5" fill="#8a8ab8"/><path d="M3.5,0.5 V10 M6.5,0.5 V10" stroke="#b0b0d0" stroke-width="0.8"/></svg>
<svg style="left:71px;top:78px" width="10" height="11" viewBox="0 0 10 11"><path d="M1,10 H4 V1 H9" stroke="#58b058" stroke-width="0.9" fill="none"/><path d="M3,1 V10" stroke="#e0d040" stroke-width="1.2"/><path d="M5,1 V10" stroke="#2a3a7a" stroke-width="1"/></svg>
<svg style="left:84px;top:78px" width="10" height="11" viewBox="0 0 10 11"><path d="M0.5,10 H4.5 V1 H9.5" stroke="#78c078" stroke-width="0.9" fill="none"/></svg>
<svg style="left:96px;top:78px" width="10" height="11" viewBox="0 0 10 11"><path d="M0.5,10 H4.5 V1 H9.5" stroke="#78c078" stroke-width="0.9" fill="none"/><path d="M3.5,2 V10" stroke="#e0e060" stroke-width="1"/></svg>
<div style="left:0px;top:92px;width:112px;height:1px;background:#e4e4e4;"></div>
<div style="left:0px;top:92px;width:1.5px;height:255px;background:#c8c8c8;"></div>
<svg style="left:2px;top:94px" width="9" height="10" viewBox="0 0 9 10"><path d="M2,1 H6 L7.5,3 V7 H1.5 V3 Z" fill="#dcdcf0" stroke="#555" stroke-width="0.9"/><path d="M3.5,2 V6 M5,2 V6" stroke="#8a8ab0" stroke-width="0.7"/><circle cx="1.8" cy="7.8" r="1.6" fill="#b01010" stroke="#400" stroke-width="0.5"/><circle cx="7.3" cy="7.8" r="1.6" fill="#b01010" stroke="#400" stroke-width="0.5"/></svg>
<div class="t" style="left:12.00px;top:96.00px;font-size:7.992000000000001px;color:#333;transform:scaleX(0.727);transform-origin:0 0;">sim - Default</div>
<svg style="left:47.5px;top:96.5px" width="38.5" height="5" viewBox="0 0 38.5 5"><path d="M0,0.5 H38.5 M0,3.5 H38.5" stroke="#a8a8a8" stroke-width="1"/><path d="M0,1.5 H38.5 M0,4.5 H38.5" stroke="#fff" stroke-width="1"/></svg>
<svg style="left:62px;top:96.5px" width="9" height="5" viewBox="0 0 9 5"><path d="M0,1 H9 M0,3 H9" stroke="#c8c8c8" stroke-width="1" stroke-dasharray="1,1"/></svg>
<svg style="left:88px;top:95.5px" width="22" height="7" viewBox="0 0 22 7"><path d="M2.5,1 V6 M0,3.5 H5" stroke="#222" stroke-width="1.15"/><rect x="8.2" y="2.8" width="3" height="3.2" fill="none" stroke="#222" stroke-width="1"/><path d="M10,4 L12.5,1.5" stroke="#222" stroke-width="0.9"/><path d="M11,0.8 H13 V2.8 Z" fill="#222"/><path d="M16,1.5 L20.5,6 M20.5,1.5 L16,6" stroke="#222" stroke-width="0.95"/></svg>
<div style="left:2px;top:104.5px;width:108px;height:9px;background:#f0f0f0;border-bottom:1px solid #a0a0a0;"></div>
<div style="left:6.5px;top:105px;width:1px;height:8px;background:#c8c8c8;"></div>
<div style="left:80.5px;top:105px;width:1px;height:8px;background:#c8c8c8;"></div>
<svg style="left:2.5px;top:107.5px" width="3.5" height="3" viewBox="0 0 3.5 3"><path d="M0,0 H3.5 L1.75,3 Z" fill="#222"/></svg>
<div class="t" style="left:8.00px;top:106.00px;font-size:7.884px;color:#333;transform:scaleX(0.755);transform-origin:0 0;">Instance</div>
<div class="t" style="left:82.00px;top:106.00px;font-size:7.884px;color:#333;transform:scaleX(0.723);transform-origin:0 0;">Design unit</div>
<div style="left:2px;top:113.5px;width:108px;height:210.5px;background:#fff;"></div>
<div style="left:2px;top:115.2px;width:108px;height:8.6px;background:#c8d4e2;"></div>
<svg style="left:4px;top:117.5px" width="5" height="5" viewBox="0 0 5 5"><rect x="0.5" y="0.5" width="4" height="4" rx="0.8" fill="#fafafa" stroke="#8a90a8" stroke-width="0.7"/><path d="M1.5,2.5 H3.5" stroke="#222" stroke-width="0.8"/></svg>
<svg style="left:12.2px;top:116.5px" width="7" height="7" viewBox="0 0 7 7"><rect x="0" y="0.8" width="5.8" height="5.6" fill="#18c0f4"/><path d="M5.8,0.8 L7,0 V5.8 L5.8,6.4 Z" fill="#0a4a80"/><path d="M0,6.4 H5.8 L7,5.8 V7 H0 Z" fill="#0a3a70"/><path d="M0,6.4 L2,4.6 V6.4 Z" fill="#0a3a70"/><path d="M0.5,1.3 H5 L0.5,5 Z" fill="#60dcff" opacity="0.6"/></svg>
<div class="t" style="left:22.70px;top:116.00px;font-size:7.992000000000001px;color:#5a6474;transform:scaleX(0.742);transform-origin:0 0;">testbench</div>
<div class="t" style="left:81.00px;top:116.00px;font-size:7.992000000000001px;color:#5a6474;transform:scaleX(0.630);transform-origin:0 0;">testbench(</div>
<svg style="left:15px;top:123px" width="1" height="60" viewBox="0 0 1 60"><path d="M0.5,0 V60" stroke="#c8c8c8" stroke-width="1" stroke-dasharray="1,1"/></svg>
<svg style="left:13.4px;top:126.69999999999999px" width="5" height="5" viewBox="0 0 5 5"><rect x="0.5" y="0.5" width="4" height="4" rx="0.8" fill="#fafafa" stroke="#8a90a8" stroke-width="0.7"/><path d="M1.5,2.5 H3.5" stroke="#222" stroke-width="0.8"/><path d="M2.5,1.5 V3.5" stroke="#222" stroke-width="0.8"/></svg>
<svg style="left:18.5px;top:129.2px" width="3" height="1" viewBox="0 0 3 1"><path d="M0,0.5 H3" stroke="#c0c0c0" stroke-width="1"/></svg>
<svg style="left:22px;top:125.69999999999999px" width="7" height="7" viewBox="0 0 7 7"><rect x="0" y="0.8" width="5.8" height="5.6" fill="#18c0f4"/><path d="M5.8,0.8 L7,0 V5.8 L5.8,6.4 Z" fill="#0a4a80"/><path d="M0,6.4 H5.8 L7,5.8 V7 H0 Z" fill="#0a3a70"/><path d="M0,6.4 L2,4.6 V6.4 Z" fill="#0a3a70"/><path d="M0.5,1.3 H5 L0.5,5 Z" fill="#60dcff" opacity="0.6"/></svg>
<div class="t" style="left:32.00px;top:125.00px;font-size:7.992000000000001px;color:#333;transform:scaleX(0.825);transform-origin:0 0;">f1</div>
<div class="t" style="left:81.00px;top:125.00px;font-size:7.992000000000001px;color:#333;transform:scaleX(0.767);transform-origin:0 0;">ss1(fast)</div>
<svg style="left:13.4px;top:135.9px" width="5" height="5" viewBox="0 0 5 5"><rect x="0.5" y="0.5" width="4" height="4" rx="0.8" fill="#fafafa" stroke="#8a90a8" stroke-width="0.7"/><path d="M1.5,2.5 H3.5" stroke="#222" stroke-width="0.8"/><path d="M2.5,1.5 V3.5" stroke="#222" stroke-width="0.8"/></svg>
<svg style="left:18.5px;top:138.4px" width="3" height="1" viewBox="0 0 3 1"><path d="M0,0.5 H3" stroke="#c0c0c0" stroke-width="1"/></svg>
<svg style="left:22px;top:134.9px" width="7" height="7" viewBox="0 0 7 7"><rect x="0" y="0.8" width="5.8" height="5.6" fill="#18c0f4"/><path d="M5.8,0.8 L7,0 V5.8 L5.8,6.4 Z" fill="#0a4a80"/><path d="M0,6.4 H5.8 L7,5.8 V7 H0 Z" fill="#0a3a70"/><path d="M0,6.4 L2,4.6 V6.4 Z" fill="#0a3a70"/><path d="M0.5,1.3 H5 L0.5,5 Z" fill="#60dcff" opacity="0.6"/></svg>
<div class="t" style="left:32.00px;top:134.00px;font-size:7.992000000000001px;color:#333;transform:scaleX(0.825);transform-origin:0 0;">f2</div>
<div class="t" style="left:81.00px;top:134.00px;font-size:7.992000000000001px;color:#333;transform:scaleX(0.767);transform-origin:0 0;">ss2(fast)</div>
<svg style="left:13.4px;top:145.1px" width="5" height="5" viewBox="0 0 5 5"><rect x="0.5" y="0.5" width="4" height="4" rx="0.8" fill="#fafafa" stroke="#8a90a8" stroke-width="0.7"/><path d="M1.5,2.5 H3.5" stroke="#222" stroke-width="0.8"/><path d="M2.5,1.5 V3.5" stroke="#222" stroke-width="0.8"/></svg>
<svg style="left:18.5px;top:147.6px" width="3" height="1" viewBox="0 0 3 1"><path d="M0,0.5 H3" stroke="#c0c0c0" stroke-width="1"/></svg>
<svg style="left:22px;top:144.1px" width="7" height="7" viewBox="0 0 7 7"><rect x="0" y="0.8" width="5.8" height="5.6" fill="#18c0f4"/><path d="M5.8,0.8 L7,0 V5.8 L5.8,6.4 Z" fill="#0a4a80"/><path d="M0,6.4 H5.8 L7,5.8 V7 H0 Z" fill="#0a3a70"/><path d="M0,6.4 L2,4.6 V6.4 Z" fill="#0a3a70"/><path d="M0.5,1.3 H5 L0.5,5 Z" fill="#60dcff" opacity="0.6"/></svg>
<div class="t" style="left:32.00px;top:144.00px;font-size:7.992000000000001px;color:#333;transform:scaleX(0.825);transform-origin:0 0;">f3</div>
<div class="t" style="left:81.00px;top:144.00px;font-size:7.992000000000001px;color:#333;transform:scaleX(0.767);transform-origin:0 0;">ss3(fast)</div>
<svg style="left:13.4px;top:154.3px" width="5" height="5" viewBox="0 0 5 5"><rect x="0.5" y="0.5" width="4" height="4" rx="0.8" fill="#fafafa" stroke="#8a90a8" stroke-width="0.7"/><path d="M1.5,2.5 H3.5" stroke="#222" stroke-width="0.8"/><path d="M2.5,1.5 V3.5" stroke="#222" stroke-width="0.8"/></svg>
<svg style="left:18.5px;top:156.8px" width="3" height="1" viewBox="0 0 3 1"><path d="M0,0.5 H3" stroke="#c0c0c0" stroke-width="1"/></svg>
<svg style="left:22px;top:153.3px" width="7" height="7" viewBox="0 0 7 7"><rect x="0" y="0.8" width="5.8" height="5.6" fill="#18c0f4"/><path d="M5.8,0.8 L7,0 V5.8 L5.8,6.4 Z" fill="#0a4a80"/><path d="M0,6.4 H5.8 L7,5.8 V7 H0 Z" fill="#0a3a70"/><path d="M0,6.4 L2,4.6 V6.4 Z" fill="#0a3a70"/><path d="M0.5,1.3 H5 L0.5,5 Z" fill="#60dcff" opacity="0.6"/></svg>
<div class="t" style="left:32.00px;top:153.00px;font-size:7.992000000000001px;color:#333;transform:scaleX(0.825);transform-origin:0 0;">f4</div>
<div class="t" style="left:81.00px;top:153.00px;font-size:7.992000000000001px;color:#333;transform:scaleX(0.767);transform-origin:0 0;">ss4(fast)</div>
<svg style="left:13.4px;top:163.5px" width="5" height="5" viewBox="0 0 5 5"><rect x="0.5" y="0.5" width="4" height="4" rx="0.8" fill="#fafafa" stroke="#8a90a8" stroke-width="0.7"/><path d="M1.5,2.5 H3.5" stroke="#222" stroke-width="0.8"/><path d="M2.5,1.5 V3.5" stroke="#222" stroke-width="0.8"/></svg>
<svg style="left:18.5px;top:166.0px" width="3" height="1" viewBox="0 0 3 1"><path d="M0,0.5 H3" stroke="#c0c0c0" stroke-width="1"/></svg>
<svg style="left:22px;top:162.5px" width="7" height="7" viewBox="0 0 7 7"><rect x="0" y="0.8" width="5.8" height="5.6" fill="#18c0f4"/><path d="M5.8,0.8 L7,0 V5.8 L5.8,6.4 Z" fill="#0a4a80"/><path d="M0,6.4 H5.8 L7,5.8 V7 H0 Z" fill="#0a3a70"/><path d="M0,6.4 L2,4.6 V6.4 Z" fill="#0a3a70"/><path d="M0.5,1.3 H5 L0.5,5 Z" fill="#60dcff" opacity="0.6"/></svg>
<div class="t" style="left:32.00px;top:162.00px;font-size:7.992000000000001px;color:#333;transform:scaleX(0.825);transform-origin:0 0;">f5</div>
<div class="t" style="left:81.00px;top:162.00px;font-size:7.992000000000001px;color:#333;transform:scaleX(0.767);transform-origin:0 0;">ss5(fast)</div>
<svg style="left:13.4px;top:172.7px" width="5" height="5" viewBox="0 0 5 5"><rect x="0.5" y="0.5" width="4" height="4" rx="0.8" fill="#fafafa" stroke="#8a90a8" stroke-width="0.7"/><path d="M1.5,2.5 H3.5" stroke="#222" stroke-width="0.8"/><path d="M2.5,1.5 V3.5" stroke="#222" stroke-width="0.8"/></svg>
<svg style="left:18.5px;top:175.2px" width="3" height="1" viewBox="0 0 3 1"><path d="M0,0.5 H3" stroke="#c0c0c0" stroke-width="1"/></svg>
<svg style="left:22px;top:171.7px" width="7" height="7" viewBox="0 0 7 7"><rect x="0" y="0.8" width="5.8" height="5.6" fill="#18c0f4"/><path d="M5.8,0.8 L7,0 V5.8 L5.8,6.4 Z" fill="#0a4a80"/><path d="M0,6.4 H5.8 L7,5.8 V7 H0 Z" fill="#0a3a70"/><path d="M0,6.4 L2,4.6 V6.4 Z" fill="#0a3a70"/><path d="M0.5,1.3 H5 L0.5,5 Z" fill="#60dcff" opacity="0.6"/></svg>
<div class="t" style="left:32.00px;top:171.00px;font-size:7.992000000000001px;color:#333;transform:scaleX(0.825);transform-origin:0 0;">f6</div>
<div class="t" style="left:81.00px;top:171.00px;font-size:7.992000000000001px;color:#333;transform:scaleX(0.767);transform-origin:0 0;">ss6(fast)</div>
<svg style="left:13.4px;top:181.89999999999998px" width="5" height="5" viewBox="0 0 5 5"><rect x="0.5" y="0.5" width="4" height="4" rx="0.8" fill="#fafafa" stroke="#8a90a8" stroke-width="0.7"/><path d="M1.5,2.5 H3.5" stroke="#222" stroke-width="0.8"/><path d="M2.5,1.5 V3.5" stroke="#222" stroke-width="0.8"/></svg>
<svg style="left:18.5px;top:184.39999999999998px" width="3" height="1" viewBox="0 0 3 1"><path d="M0,0.5 H3" stroke="#c0c0c0" stroke-width="1"/></svg>
<svg style="left:22px;top:180.89999999999998px" width="7" height="7" viewBox="0 0 7 7"><rect x="0" y="0.8" width="5.8" height="5.6" fill="#18c0f4"/><path d="M5.8,0.8 L7,0 V5.8 L5.8,6.4 Z" fill="#0a4a80"/><path d="M0,6.4 H5.8 L7,5.8 V7 H0 Z" fill="#0a3a70"/><path d="M0,6.4 L2,4.6 V6.4 Z" fill="#0a3a70"/><path d="M0.5,1.3 H5 L0.5,5 Z" fill="#60dcff" opacity="0.6"/></svg>
<div class="t" style="left:32.00px;top:180.00px;font-size:7.992000000000001px;color:#333;transform:scaleX(0.825);transform-origin:0 0;">f7</div>
<div class="t" style="left:81.00px;top:180.00px;font-size:7.992000000000001px;color:#333;transform:scaleX(0.767);transform-origin:0 0;">ss7(fast)</div>
<svg style="left:11px;top:189.1px" width="7" height="8" viewBox="0 0 7 8"><rect x="0.5" y="0.5" width="6" height="7" fill="#fff" stroke="#3a70c0" stroke-width="0.8"/><path d="M1,6.5 L3,2.5 L4.5,5 L6,1.5" stroke="#d02020" stroke-width="0.9" fill="none"/><path d="M1,7 H6" stroke="#20a020" stroke-width="1"/></svg>
<div class="t" style="left:22.00px;top:190.00px;font-size:7.776000000000001px;color:#333;transform:scaleX(0.800);transform-origin:0 0;">#vsim_capacity#</div>
<div style="left:2px;top:324px;width:108px;height:8px;background:#f4f4f4;border-top:1px solid #e0e0e0;"></div>
<div style="left:2px;top:324.5px;width:8px;height:7.5px;background:#f0f0f0;border:1px solid #fff;border-right-color:#a0a0a0;border-bottom-color:#a0a0a0;"></div>
<svg style="left:4.5px;top:326.5px" width="3" height="4" viewBox="0 0 3 4"><path d="M3,0 V4 L0,2 Z" fill="#111"/></svg>
<div style="left:10px;top:324.5px;width:27px;height:7.5px;background:#eaeaea;border:1px solid #fff;border-right-color:#a0a0a0;border-bottom-color:#a0a0a0;"></div>
<div style="left:101px;top:324.5px;width:9px;height:7.5px;background:#f0f0f0;border:1px solid #fff;border-right-color:#a0a0a0;border-bottom-color:#a0a0a0;"></div>
<svg style="left:104.5px;top:326.5px" width="3" height="4" viewBox="0 0 3 4"><path d="M0,0 V4 L3,2 Z" fill="#111"/></svg>
<div style="left:110px;top:93px;width:6px;height:240px;background:linear-gradient(90deg,#dadada 0,#dadada 1.5px,#cdcdcd 1.5px,#c8c8c8 5px,#dedede 5px);"></div>
<div style="left:0px;top:332.5px;width:112px;height:1.5px;background:#f0f0f0;"></div>
<div style="left:74px;top:333.5px;width:26px;height:11px;background:#fbfbfb;border-top:1px solid #707070;"></div>
<div style="left:1.5px;top:333.5px;width:40.5px;height:11.5px;background:linear-gradient(#e2e2e2,#cfcfcf);border:1px solid #5a5a5a;border-top:none;border-radius:0 0 2px 2px;"></div>
<svg style="left:3px;top:334.5px" width="8" height="8" viewBox="0 0 8 8"><rect x="0.5" y="1.5" width="7" height="6" rx="0.8" fill="#d8dce8" stroke="#556" stroke-width="0.8"/><circle cx="2.5" cy="1" r="0.9" fill="#2040c0"/><circle cx="5.5" cy="1" r="0.9" fill="#2040c0"/></svg>
<div class="t" style="left:13.00px;top:336.00px;font-size:7.992000000000001px;color:#2a2a2a;transform:scaleX(0.764);transform-origin:0 0;">Project</div>
<div class="t" style="left:36.50px;top:338.00px;font-size:5.94px;color:#a0a0a0;transform:scaleX(1.000);transform-origin:0 0;">✕</div>
<div style="left:42px;top:333px;width:32.5px;height:12.5px;background:linear-gradient(#fdfdfd,#f2f2f2);border:1px solid #5a5a5a;border-top:none;border-radius:0 0 2px 2px;"></div>
<svg style="left:44px;top:334px" width="9" height="10" viewBox="0 0 9 10"><path d="M2,1 H6 L7.5,3 V7 H1.5 V3 Z" fill="#dcdcf0" stroke="#555" stroke-width="0.9"/><circle cx="1.8" cy="7.8" r="1.6" fill="#b01010"/><circle cx="7.3" cy="7.8" r="1.6" fill="#b01010"/></svg>
<div class="t" style="left:55.00px;top:336.00px;font-size:7.992000000000001px;color:#2a2a2a;transform:scaleX(0.603);transform-origin:0 0;">sim</div>
<div class="t" style="left:67.50px;top:338.00px;font-size:5.94px;color:#a0a0a0;transform:scaleX(1.000);transform-origin:0 0;">✕</div>
<div style="left:100.5px;top:334px;width:5px;height:9px;background:#f0f0f0;border:1px solid #c0c0c0;"></div>
<svg style="left:102px;top:336.5px" width="3" height="4" viewBox="0 0 3 4"><path d="M3,0 V4 L0,2 Z" fill="#333"/></svg>
<div style="left:105.5px;top:334px;width:5px;height:9px;background:#f0f0f0;border:1px solid #c0c0c0;"></div>
<svg style="left:106.5px;top:336.5px" width="3" height="4" viewBox="0 0 3 4"><path d="M0,0 V4 L3,2 Z" fill="#333"/></svg>
<div style="left:110px;top:104px;width:6px;height:241px;background:linear-gradient(90deg,#dadada 0,#dadada 1.5px,#cdcdcd 1.5px,#c8c8c8 5px,#dedede 5px);"></div>
<svg style="left:116px;top:93.5px" width="10" height="10" viewBox="0 0 10 10"><path d="M3,0.5 L7,3.5 L3,6.5 L0,3.5 Z" fill="#a020d0"/><rect x="5" y="4" width="4.5" height="4" fill="#10a030"/><path d="M4,3 L8,6.5 L4,10 L0.5,6.5 Z" fill="#1a50e0"/></svg>
<div class="t" style="left:127.00px;top:96.00px;font-size:8.100000000000001px;color:#333;transform:scaleX(0.728);transform-origin:0 0;">Objects</div>
<svg style="left:150px;top:96.5px" width="50" height="5" viewBox="0 0 50 5"><path d="M0,0.5 H50 M0,3.5 H50" stroke="#a8a8a8" stroke-width="1"/><path d="M0,1.5 H50 M0,4.5 H50" stroke="#fff" stroke-width="1"/></svg>
<svg style="left:199px;top:96.5px" width="9" height="5" viewBox="0 0 9 5"><path d="M0,1 H9 M0,3 H9" stroke="#c8c8c8" stroke-width="1" stroke-dasharray="1,1"/></svg>
<svg style="left:208px;top:96.5px" width="52.5" height="5" viewBox="0 0 52.5 5"><path d="M0,0.5 H52.5 M0,3.5 H52.5" stroke="#a8a8a8" stroke-width="1"/><path d="M0,1.5 H52.5 M0,4.5 H52.5" stroke="#fff" stroke-width="1"/></svg>
<svg style="left:263px;top:95.5px" width="22" height="7" viewBox="0 0 22 7"><path d="M2.5,1 V6 M0,3.5 H5" stroke="#222" stroke-width="1.15"/><rect x="8.2" y="2.8" width="3" height="3.2" fill="none" stroke="#222" stroke-width="1"/><path d="M10,4 L12.5,1.5" stroke="#222" stroke-width="0.9"/><path d="M11,0.8 H13 V2.8 Z" fill="#222"/><path d="M16,1.5 L20.5,6 M20.5,1.5 L16,6" stroke="#222" stroke-width="0.95"/></svg>
<div style="left:116px;top:104.5px;width:169px;height:9px;background:#f0f0f0;border-bottom:1px solid #b0b0b0;"></div>
<div style="left:116px;top:104.5px;width:1px;height:9px;background:#c0c0c0;"></div>
<svg style="left:117.5px;top:107.5px" width="3.5" height="3" viewBox="0 0 3.5 3"><path d="M0,0 H3.5 L1.75,3 Z" fill="#222"/></svg>
<div style="left:122px;top:105px;width:1px;height:8.5px;background:#c8c8c8;"></div>
<div style="left:123px;top:105px;width:1px;height:8.5px;background:#fff;"></div>
<div style="left:195.5px;top:105px;width:1px;height:8.5px;background:#c8c8c8;"></div>
<div style="left:196.5px;top:105px;width:1px;height:8.5px;background:#fff;"></div>
<div style="left:219.5px;top:105px;width:1px;height:8.5px;background:#c8c8c8;"></div>
<div style="left:220.5px;top:105px;width:1px;height:8.5px;background:#fff;"></div>
<div style="left:249.5px;top:105px;width:1px;height:8.5px;background:#c8c8c8;"></div>
<div style="left:250.5px;top:105px;width:1px;height:8.5px;background:#fff;"></div>
<div style="left:273.5px;top:105px;width:1px;height:8.5px;background:#c8c8c8;"></div>
<div style="left:274.5px;top:105px;width:1px;height:8.5px;background:#fff;"></div>
<div class="t" style="left:123.00px;top:106.00px;font-size:7.884px;color:#333;transform:scaleX(0.666);transform-origin:0 0;">Name</div>
<svg style="left:189.5px;top:106.5px" width="5" height="4.5" viewBox="0 0 5 4.5"><path d="M2.5,0.5 L4.5,4 H0.5 Z" fill="none" stroke="#888" stroke-width="0.7"/></svg>
<div class="t" style="left:197.00px;top:106.00px;font-size:7.884px;color:#333;transform:scaleX(0.817);transform-origin:0 0;">Value</div>
<div class="t" style="left:220.50px;top:106.00px;font-size:7.884px;color:#333;transform:scaleX(0.792);transform-origin:0 0;">Kind</div>
<div class="t" style="left:251.00px;top:106.00px;font-size:7.884px;color:#333;transform:scaleX(0.862);transform-origin:0 0;">Mode</div>
<div style="left:116px;top:113.5px;width:169px;height:231.5px;background:#525b8a;"></div>
<div style="left:116px;top:113.5px;width:1px;height:231.5px;background:#5a64a0;"></div>
<div style="left:283px;top:113.5px;width:2px;height:231.5px;background:#4c5588;"></div>
<svg style="left:126px;top:115.7px" width="8.4" height="8.2" viewBox="0 0 8.4 8.2"><path d="M4.2,0 L8.4,4.1 L4.2,8.2 L0,4.1 Z" fill="#1aa8e6"/><path d="M4.2,0 L0,4.1 L1.4,4.1 L4.2,1.3 Z" fill="#a8ecff"/><path d="M4.2,1.3 L1.4,4.1 L3.3600000000000003,3.69 L4.620000000000001,1.6 Z" fill="#60d0f8"/><path d="M8.4,4.1 L4.2,8.2 L4.2,6.8999999999999995 L7.0,4.1 Z" fill="#0a6aa0"/><path d="M0,4.1 L4.2,8.2 L4.2,6.8999999999999995 L1.4,4.1 Z" fill="#0c88c8"/></svg>
<div class="t" style="left:137.00px;top:116.00px;font-size:7.992000000000001px;color:#eceef6;transform:scaleX(0.741);transform-origin:0 0;">A</div>
<div class="t" style="left:197.00px;top:116.00px;font-size:7.992000000000001px;color:#eceef6;transform:scaleX(0.741);transform-origin:0 0;">1</div>
<div class="t" style="left:220.00px;top:116.00px;font-size:7.992000000000001px;color:#eceef6;transform:scaleX(0.741);transform-origin:0 0;">Register</div>
<div class="t" style="left:250.00px;top:116.00px;font-size:7.992000000000001px;color:#eceef6;transform:scaleX(0.769);transform-origin:0 0;">Internal</div>
<svg style="left:126px;top:124.88px" width="8.4" height="8.2" viewBox="0 0 8.4 8.2"><path d="M4.2,0 L8.4,4.1 L4.2,8.2 L0,4.1 Z" fill="#1aa8e6"/><path d="M4.2,0 L0,4.1 L1.4,4.1 L4.2,1.3 Z" fill="#a8ecff"/><path d="M4.2,1.3 L1.4,4.1 L3.3600000000000003,3.69 L4.620000000000001,1.6 Z" fill="#60d0f8"/><path d="M8.4,4.1 L4.2,8.2 L4.2,6.8999999999999995 L7.0,4.1 Z" fill="#0a6aa0"/><path d="M0,4.1 L4.2,8.2 L4.2,6.8999999999999995 L1.4,4.1 Z" fill="#0c88c8"/></svg>
<div class="t" style="left:137.00px;top:125.00px;font-size:7.992000000000001px;color:#eceef6;transform:scaleX(0.741);transform-origin:0 0;">B</div>
<div class="t" style="left:197.00px;top:125.00px;font-size:7.992000000000001px;color:#eceef6;transform:scaleX(0.741);transform-origin:0 0;">0</div>
<div class="t" style="left:220.00px;top:125.00px;font-size:7.992000000000001px;color:#eceef6;transform:scaleX(0.741);transform-origin:0 0;">Register</div>
<div class="t" style="left:250.00px;top:125.00px;font-size:7.992000000000001px;color:#eceef6;transform:scaleX(0.769);transform-origin:0 0;">Internal</div>
<svg style="left:126px;top:134.06px" width="8.4" height="8.2" viewBox="0 0 8.4 8.2"><path d="M4.2,0 L8.4,4.1 L4.2,8.2 L0,4.1 Z" fill="#1aa8e6"/><path d="M4.2,0 L0,4.1 L1.4,4.1 L4.2,1.3 Z" fill="#a8ecff"/><path d="M4.2,1.3 L1.4,4.1 L3.3600000000000003,3.69 L4.620000000000001,1.6 Z" fill="#60d0f8"/><path d="M8.4,4.1 L4.2,8.2 L4.2,6.8999999999999995 L7.0,4.1 Z" fill="#0a6aa0"/><path d="M0,4.1 L4.2,8.2 L4.2,6.8999999999999995 L1.4,4.1 Z" fill="#0c88c8"/></svg>
<div class="t" style="left:137.00px;top:135.00px;font-size:7.992000000000001px;color:#eceef6;transform:scaleX(0.741);transform-origin:0 0;">C</div>
<div class="t" style="left:197.00px;top:135.00px;font-size:7.992000000000001px;color:#eceef6;transform:scaleX(0.741);transform-origin:0 0;">0</div>
<div class="t" style="left:220.00px;top:135.00px;font-size:7.992000000000001px;color:#eceef6;transform:scaleX(0.741);transform-origin:0 0;">Register</div>
<div class="t" style="left:250.00px;top:135.00px;font-size:7.992000000000001px;color:#eceef6;transform:scaleX(0.769);transform-origin:0 0;">Internal</div>
<svg style="left:126px;top:143.24px" width="8.4" height="8.2" viewBox="0 0 8.4 8.2"><path d="M4.2,0 L8.4,4.1 L4.2,8.2 L0,4.1 Z" fill="#1aa8e6"/><path d="M4.2,0 L0,4.1 L1.4,4.1 L4.2,1.3 Z" fill="#a8ecff"/><path d="M4.2,1.3 L1.4,4.1 L3.3600000000000003,3.69 L4.620000000000001,1.6 Z" fill="#60d0f8"/><path d="M8.4,4.1 L4.2,8.2 L4.2,6.8999999999999995 L7.0,4.1 Z" fill="#0a6aa0"/><path d="M0,4.1 L4.2,8.2 L4.2,6.8999999999999995 L1.4,4.1 Z" fill="#0c88c8"/></svg>
<div class="t" style="left:137.00px;top:144.00px;font-size:7.992000000000001px;color:#eceef6;transform:scaleX(0.741);transform-origin:0 0;">D</div>
<div class="t" style="left:197.00px;top:144.00px;font-size:7.992000000000001px;color:#eceef6;transform:scaleX(0.741);transform-origin:0 0;">1</div>
<div class="t" style="left:220.00px;top:144.00px;font-size:7.992000000000001px;color:#eceef6;transform:scaleX(0.741);transform-origin:0 0;">Register</div>
<div class="t" style="left:250.00px;top:144.00px;font-size:7.992000000000001px;color:#eceef6;transform:scaleX(0.769);transform-origin:0 0;">Internal</div>
<svg style="left:126px;top:152.42px" width="8.4" height="8.2" viewBox="0 0 8.4 8.2"><path d="M4.2,0 L8.4,4.1 L4.2,8.2 L0,4.1 Z" fill="#1aa8e6"/><path d="M4.2,0 L0,4.1 L1.4,4.1 L4.2,1.3 Z" fill="#a8ecff"/><path d="M4.2,1.3 L1.4,4.1 L3.3600000000000003,3.69 L4.620000000000001,1.6 Z" fill="#60d0f8"/><path d="M8.4,4.1 L4.2,8.2 L4.2,6.8999999999999995 L7.0,4.1 Z" fill="#0a6aa0"/><path d="M0,4.1 L4.2,8.2 L4.2,6.8999999999999995 L1.4,4.1 Z" fill="#0c88c8"/></svg>
<div class="t" style="left:137.00px;top:153.00px;font-size:7.992000000000001px;color:#eceef6;transform:scaleX(0.741);transform-origin:0 0;">a</div>
<div class="t" style="left:197.00px;top:153.00px;font-size:7.992000000000001px;color:#eceef6;transform:scaleX(0.741);transform-origin:0 0;">St1</div>
<div class="t" style="left:220.00px;top:153.00px;font-size:7.992000000000001px;color:#eceef6;transform:scaleX(0.741);transform-origin:0 0;">Net</div>
<div class="t" style="left:250.00px;top:153.00px;font-size:7.992000000000001px;color:#eceef6;transform:scaleX(0.769);transform-origin:0 0;">Internal</div>
<svg style="left:126px;top:161.6px" width="8.4" height="8.2" viewBox="0 0 8.4 8.2"><path d="M4.2,0 L8.4,4.1 L4.2,8.2 L0,4.1 Z" fill="#1aa8e6"/><path d="M4.2,0 L0,4.1 L1.4,4.1 L4.2,1.3 Z" fill="#a8ecff"/><path d="M4.2,1.3 L1.4,4.1 L3.3600000000000003,3.69 L4.620000000000001,1.6 Z" fill="#60d0f8"/><path d="M8.4,4.1 L4.2,8.2 L4.2,6.8999999999999995 L7.0,4.1 Z" fill="#0a6aa0"/><path d="M0,4.1 L4.2,8.2 L4.2,6.8999999999999995 L1.4,4.1 Z" fill="#0c88c8"/></svg>
<div class="t" style="left:137.00px;top:162.00px;font-size:7.992000000000001px;color:#eceef6;transform:scaleX(0.741);transform-origin:0 0;">b</div>
<div class="t" style="left:197.00px;top:162.00px;font-size:7.992000000000001px;color:#eceef6;transform:scaleX(0.741);transform-origin:0 0;">St1</div>
<div class="t" style="left:220.00px;top:162.00px;font-size:7.992000000000001px;color:#eceef6;transform:scaleX(0.741);transform-origin:0 0;">Net</div>
<div class="t" style="left:250.00px;top:162.00px;font-size:7.992000000000001px;color:#eceef6;transform:scaleX(0.769);transform-origin:0 0;">Internal</div>
<svg style="left:126px;top:170.78px" width="8.4" height="8.2" viewBox="0 0 8.4 8.2"><path d="M4.2,0 L8.4,4.1 L4.2,8.2 L0,4.1 Z" fill="#1aa8e6"/><path d="M4.2,0 L0,4.1 L1.4,4.1 L4.2,1.3 Z" fill="#a8ecff"/><path d="M4.2,1.3 L1.4,4.1 L3.3600000000000003,3.69 L4.620000000000001,1.6 Z" fill="#60d0f8"/><path d="M8.4,4.1 L4.2,8.2 L4.2,6.8999999999999995 L7.0,4.1 Z" fill="#0a6aa0"/><path d="M0,4.1 L4.2,8.2 L4.2,6.8999999999999995 L1.4,4.1 Z" fill="#0c88c8"/></svg>
<div class="t" style="left:137.00px;top:171.00px;font-size:7.992000000000001px;color:#eceef6;transform:scaleX(0.741);transform-origin:0 0;">c</div>
<div class="t" style="left:197.00px;top:171.00px;font-size:7.992000000000001px;color:#eceef6;transform:scaleX(0.741);transform-origin:0 0;">St1</div>
<div class="t" style="left:220.00px;top:171.00px;font-size:7.992000000000001px;color:#eceef6;transform:scaleX(0.741);transform-origin:0 0;">Net</div>
<div class="t" style="left:250.00px;top:171.00px;font-size:7.992000000000001px;color:#eceef6;transform:scaleX(0.769);transform-origin:0 0;">Internal</div>
<svg style="left:126px;top:179.96px" width="8.4" height="8.2" viewBox="0 0 8.4 8.2"><path d="M4.2,0 L8.4,4.1 L4.2,8.2 L0,4.1 Z" fill="#1aa8e6"/><path d="M4.2,0 L0,4.1 L1.4,4.1 L4.2,1.3 Z" fill="#a8ecff"/><path d="M4.2,1.3 L1.4,4.1 L3.3600000000000003,3.69 L4.620000000000001,1.6 Z" fill="#60d0f8"/><path d="M8.4,4.1 L4.2,8.2 L4.2,6.8999999999999995 L7.0,4.1 Z" fill="#0a6aa0"/><path d="M0,4.1 L4.2,8.2 L4.2,6.8999999999999995 L1.4,4.1 Z" fill="#0c88c8"/></svg>
<div class="t" style="left:137.00px;top:181.00px;font-size:7.992000000000001px;color:#eceef6;transform:scaleX(0.741);transform-origin:0 0;">d</div>
<div class="t" style="left:197.00px;top:181.00px;font-size:7.992000000000001px;color:#eceef6;transform:scaleX(0.741);transform-origin:0 0;">St1</div>
<div class="t" style="left:220.00px;top:181.00px;font-size:7.992000000000001px;color:#eceef6;transform:scaleX(0.741);transform-origin:0 0;">Net</div>
<div class="t" style="left:250.00px;top:181.00px;font-size:7.992000000000001px;color:#eceef6;transform:scaleX(0.769);transform-origin:0 0;">Internal</div>
<svg style="left:126px;top:189.14000000000001px" width="8.4" height="8.2" viewBox="0 0 8.4 8.2"><path d="M4.2,0 L8.4,4.1 L4.2,8.2 L0,4.1 Z" fill="#1aa8e6"/><path d="M4.2,0 L0,4.1 L1.4,4.1 L4.2,1.3 Z" fill="#a8ecff"/><path d="M4.2,1.3 L1.4,4.1 L3.3600000000000003,3.69 L4.620000000000001,1.6 Z" fill="#60d0f8"/><path d="M8.4,4.1 L4.2,8.2 L4.2,6.8999999999999995 L7.0,4.1 Z" fill="#0a6aa0"/><path d="M0,4.1 L4.2,8.2 L4.2,6.8999999999999995 L1.4,4.1 Z" fill="#0c88c8"/></svg>
<div class="t" style="left:137.00px;top:190.00px;font-size:7.992000000000001px;color:#eceef6;transform:scaleX(0.741);transform-origin:0 0;">e</div>
<div class="t" style="left:197.00px;top:190.00px;font-size:7.992000000000001px;color:#eceef6;transform:scaleX(0.741);transform-origin:0 0;">St0</div>
<div class="t" style="left:220.00px;top:190.00px;font-size:7.992000000000001px;color:#eceef6;transform:scaleX(0.741);transform-origin:0 0;">Net</div>
<div class="t" style="left:250.00px;top:190.00px;font-size:7.992000000000001px;color:#eceef6;transform:scaleX(0.769);transform-origin:0 0;">Internal</div>
<svg style="left:126px;top:198.32000000000002px" width="8.4" height="8.2" viewBox="0 0 8.4 8.2"><path d="M4.2,0 L8.4,4.1 L4.2,8.2 L0,4.1 Z" fill="#1aa8e6"/><path d="M4.2,0 L0,4.1 L1.4,4.1 L4.2,1.3 Z" fill="#a8ecff"/><path d="M4.2,1.3 L1.4,4.1 L3.3600000000000003,3.69 L4.620000000000001,1.6 Z" fill="#60d0f8"/><path d="M8.4,4.1 L4.2,8.2 L4.2,6.8999999999999995 L7.0,4.1 Z" fill="#0a6aa0"/><path d="M0,4.1 L4.2,8.2 L4.2,6.8999999999999995 L1.4,4.1 Z" fill="#0c88c8"/></svg>
<div class="t" style="left:137.00px;top:199.00px;font-size:7.992000000000001px;color:#eceef6;transform:scaleX(0.741);transform-origin:0 0;">f</div>
<div class="t" style="left:197.00px;top:199.00px;font-size:7.992000000000001px;color:#eceef6;transform:scaleX(0.741);transform-origin:0 0;">St1</div>
<div class="t" style="left:220.00px;top:199.00px;font-size:7.992000000000001px;color:#eceef6;transform:scaleX(0.741);transform-origin:0 0;">Net</div>
<div class="t" style="left:250.00px;top:199.00px;font-size:7.992000000000001px;color:#eceef6;transform:scaleX(0.769);transform-origin:0 0;">Internal</div>
<div style="left:116px;top:207.9px;width:158px;height:8.6px;background:#c8d4e2;"></div>
<svg style="left:126px;top:207.5px" width="8.4" height="8.2" viewBox="0 0 8.4 8.2"><path d="M4.2,0 L8.4,4.1 L4.2,8.2 L0,4.1 Z" fill="#1aa8e6"/><path d="M4.2,0 L0,4.1 L1.4,4.1 L4.2,1.3 Z" fill="#a8ecff"/><path d="M4.2,1.3 L1.4,4.1 L3.3600000000000003,3.69 L4.620000000000001,1.6 Z" fill="#60d0f8"/><path d="M8.4,4.1 L4.2,8.2 L4.2,6.8999999999999995 L7.0,4.1 Z" fill="#0a6aa0"/><path d="M0,4.1 L4.2,8.2 L4.2,6.8999999999999995 L1.4,4.1 Z" fill="#0c88c8"/></svg>
<div class="t" style="left:137.00px;top:208.00px;font-size:7.992000000000001px;color:#4a5262;transform:scaleX(0.741);transform-origin:0 0;">g</div>
<div class="t" style="left:197.00px;top:208.00px;font-size:7.992000000000001px;color:#4a5262;transform:scaleX(0.741);transform-origin:0 0;">St1</div>
<div class="t" style="left:220.00px;top:208.00px;font-size:7.992000000000001px;color:#4a5262;transform:scaleX(0.741);transform-origin:0 0;">Net</div>
<div class="t" style="left:250.00px;top:208.00px;font-size:7.992000000000001px;color:#4a5262;transform:scaleX(0.769);transform-origin:0 0;">Internal</div>
<div style="left:285px;top:93px;width:7px;height:254px;background:linear-gradient(90deg,#dedede 0,#dedede 2px,#c8c8c8 2px,#bebebe 5px,#e2e2e2 5px,#e2e2e2 6.5px,#c4c4c4 6.5px);"></div>
<div style="left:292px;top:92px;width:448px;height:255px;background:#f0f0f0;"></div>
<div style="left:291px;top:94px;width:447px;height:10.5px;background:linear-gradient(#c4d6ec,#a4bcdc);border-top:1px solid #b0c4dc;"></div>
<svg style="left:292px;top:96px" width="8" height="8" viewBox="0 0 8 8"><rect x="0" y="0" width="8" height="8" fill="#0a1a10" stroke="#6a8aa0" stroke-width="0.6"/><path d="M1.5,6.5 V2 H4 V5 H6.5 V2" stroke="#20e0a0" stroke-width="0.9" fill="none"/><rect x="0" y="0" width="8" height="1.5" fill="#5a7a90"/></svg>
<div class="t" style="left:302.00px;top:96.00px;font-size:8.100000000000001px;color:#1a2a3a;transform:scaleX(0.751);transform-origin:0 0;">Wave - Default</div>
<svg style="left:344.5px;top:96.3px" width="370" height="6" viewBox="0 0 370 6"><path d="M0,0.6 H370 M0,4.4 H370" stroke="#1e3458" stroke-width="1.1"/><path d="M0,2.5 H370" stroke="#d8f0ff" stroke-width="2.2"/></svg>
<svg style="left:713px;top:97.2px" width="2" height="4" viewBox="0 0 2 4"><rect width="1.5" height="4" fill="#1e3a66"/></svg>
<div style="left:715.3px;top:95.3px;width:6.8px;height:8px;background:linear-gradient(#fafcff,#e0e8f0);border:0.6px solid #8aa0b8;"></div>
<div style="left:722.8px;top:95.3px;width:6.8px;height:8px;background:linear-gradient(#fafcff,#e0e8f0);border:0.6px solid #8aa0b8;"></div>
<div style="left:730.3px;top:95.3px;width:6.8px;height:8px;background:linear-gradient(#fafcff,#e0e8f0);border:0.6px solid #8aa0b8;"></div>
<svg style="left:716px;top:95.8px" width="22" height="7" viewBox="0 0 22 7"><path d="M2.5,1 V6 M0,3.5 H5" stroke="#222" stroke-width="1.15"/><rect x="8.2" y="2.8" width="3" height="3.2" fill="none" stroke="#222" stroke-width="1"/><path d="M10,4 L12.5,1.5" stroke="#222" stroke-width="0.9"/><path d="M11,0.8 H13 V2.8 Z" fill="#222"/><path d="M16,1.5 L20.5,6 M20.5,1.5 L16,6" stroke="#222" stroke-width="0.95"/></svg>
<div style="left:292px;top:104.5px;width:143px;height:226px;background:#808080;"></div>
<div style="left:292px;top:104.5px;width:143px;height:0.8px;background:#e8eef8;"></div>
<div style="left:292.5px;top:117px;width:4.5px;height:180px;background:#fff;"></div>
<div style="left:292.5px;top:116px;width:142.5px;height:1.2px;background:#f4f4f4;"></div>
<div style="left:378.5px;top:105px;width:1.6px;height:214px;background:#f0f0f0;"></div>
<div style="left:434px;top:105px;width:1.5px;height:214px;background:#c8c8c8;"></div>
<svg style="left:297px;top:106px" width="10" height="9" viewBox="0 0 10 9"><path d="M3,0.5 L6.5,3 L3,5.5 L0,3 Z" fill="#a020d0"/><rect x="5" y="3.5" width="4" height="4" fill="#10a030"/><path d="M4,2.5 L7.5,5.5 L4,8.8 L0.5,5.5 Z" fill="#1a50e0"/><path d="M5.5,2 L8,4 L6,5.5 Z" fill="#40e0f0"/></svg>
<svg style="left:308.5px;top:109.5px" width="3" height="2.5" viewBox="0 0 3 2.5"><path d="M0,0 H3 L1.5,2.5 Z" fill="#111"/></svg>
<div class="t" style="left:417.36px;top:107.00px;font-size:7.992000000000001px;color:#e4e4e4;transform:scaleX(0.741);transform-origin:0 0;">Msgs</div>
<svg style="left:308px;top:118.6px" width="7.8" height="7.8" viewBox="0 0 7.8 7.8"><path d="M3.9,0 L7.8,3.9 L3.9,7.8 L0,3.9 Z" fill="#1aa8e6"/><path d="M3.9,0 L0,3.9 L1.4,3.9 L3.9,1.3 Z" fill="#a8ecff"/><path d="M3.9,1.3 L1.4,3.9 L3.12,3.51 L4.29,1.6 Z" fill="#60d0f8"/><path d="M7.8,3.9 L3.9,7.8 L3.9,6.5 L6.4,3.9 Z" fill="#0a6aa0"/><path d="M0,3.9 L3.9,7.8 L3.9,6.5 L1.4,3.9 Z" fill="#0c88c8"/></svg>
<div class="t" style="left:318.00px;top:119.00px;font-size:7.992000000000001px;color:#ececec;transform:scaleX(0.777);transform-origin:0 0;">/testbench/A</div>
<div class="t" style="left:381.00px;top:119.00px;font-size:7.992000000000001px;color:#ececec;transform:scaleX(0.741);transform-origin:0 0;">1</div>
<svg style="left:308px;top:127.76999999999998px" width="7.8" height="7.8" viewBox="0 0 7.8 7.8"><path d="M3.9,0 L7.8,3.9 L3.9,7.8 L0,3.9 Z" fill="#1aa8e6"/><path d="M3.9,0 L0,3.9 L1.4,3.9 L3.9,1.3 Z" fill="#a8ecff"/><path d="M3.9,1.3 L1.4,3.9 L3.12,3.51 L4.29,1.6 Z" fill="#60d0f8"/><path d="M7.8,3.9 L3.9,7.8 L3.9,6.5 L6.4,3.9 Z" fill="#0a6aa0"/><path d="M0,3.9 L3.9,7.8 L3.9,6.5 L1.4,3.9 Z" fill="#0c88c8"/></svg>
<div class="t" style="left:318.00px;top:128.00px;font-size:7.992000000000001px;color:#ececec;transform:scaleX(0.777);transform-origin:0 0;">/testbench/B</div>
<div class="t" style="left:381.00px;top:128.00px;font-size:7.992000000000001px;color:#ececec;transform:scaleX(0.741);transform-origin:0 0;">0</div>
<svg style="left:308px;top:136.94px" width="7.8" height="7.8" viewBox="0 0 7.8 7.8"><path d="M3.9,0 L7.8,3.9 L3.9,7.8 L0,3.9 Z" fill="#1aa8e6"/><path d="M3.9,0 L0,3.9 L1.4,3.9 L3.9,1.3 Z" fill="#a8ecff"/><path d="M3.9,1.3 L1.4,3.9 L3.12,3.51 L4.29,1.6 Z" fill="#60d0f8"/><path d="M7.8,3.9 L3.9,7.8 L3.9,6.5 L6.4,3.9 Z" fill="#0a6aa0"/><path d="M0,3.9 L3.9,7.8 L3.9,6.5 L1.4,3.9 Z" fill="#0c88c8"/></svg>
<div class="t" style="left:318.00px;top:137.00px;font-size:7.992000000000001px;color:#ececec;transform:scaleX(0.769);transform-origin:0 0;">/testbench/C</div>
<div class="t" style="left:381.00px;top:137.00px;font-size:7.992000000000001px;color:#ececec;transform:scaleX(0.741);transform-origin:0 0;">0</div>
<svg style="left:308px;top:146.10999999999999px" width="7.8" height="7.8" viewBox="0 0 7.8 7.8"><path d="M3.9,0 L7.8,3.9 L3.9,7.8 L0,3.9 Z" fill="#1aa8e6"/><path d="M3.9,0 L0,3.9 L1.4,3.9 L3.9,1.3 Z" fill="#a8ecff"/><path d="M3.9,1.3 L1.4,3.9 L3.12,3.51 L4.29,1.6 Z" fill="#60d0f8"/><path d="M7.8,3.9 L3.9,7.8 L3.9,6.5 L6.4,3.9 Z" fill="#0a6aa0"/><path d="M0,3.9 L3.9,7.8 L3.9,6.5 L1.4,3.9 Z" fill="#0c88c8"/></svg>
<div class="t" style="left:318.00px;top:147.00px;font-size:7.992000000000001px;color:#ececec;transform:scaleX(0.769);transform-origin:0 0;">/testbench/D</div>
<div class="t" style="left:381.00px;top:147.00px;font-size:7.992000000000001px;color:#ececec;transform:scaleX(0.741);transform-origin:0 0;">1</div>
<svg style="left:308px;top:155.28px" width="7.8" height="7.8" viewBox="0 0 7.8 7.8"><path d="M3.9,0 L7.8,3.9 L3.9,7.8 L0,3.9 Z" fill="#1aa8e6"/><path d="M3.9,0 L0,3.9 L1.4,3.9 L3.9,1.3 Z" fill="#a8ecff"/><path d="M3.9,1.3 L1.4,3.9 L3.12,3.51 L4.29,1.6 Z" fill="#60d0f8"/><path d="M7.8,3.9 L3.9,7.8 L3.9,6.5 L6.4,3.9 Z" fill="#0a6aa0"/><path d="M0,3.9 L3.9,7.8 L3.9,6.5 L1.4,3.9 Z" fill="#0c88c8"/></svg>
<div class="t" style="left:318.00px;top:156.00px;font-size:7.992000000000001px;color:#ececec;transform:scaleX(0.769);transform-origin:0 0;">/testbench/a</div>
<div class="t" style="left:381.00px;top:156.00px;font-size:7.992000000000001px;color:#ececec;transform:scaleX(0.741);transform-origin:0 0;">St1</div>
<svg style="left:308px;top:164.45px" width="7.8" height="7.8" viewBox="0 0 7.8 7.8"><path d="M3.9,0 L7.8,3.9 L3.9,7.8 L0,3.9 Z" fill="#1aa8e6"/><path d="M3.9,0 L0,3.9 L1.4,3.9 L3.9,1.3 Z" fill="#a8ecff"/><path d="M3.9,1.3 L1.4,3.9 L3.12,3.51 L4.29,1.6 Z" fill="#60d0f8"/><path d="M7.8,3.9 L3.9,7.8 L3.9,6.5 L6.4,3.9 Z" fill="#0a6aa0"/><path d="M0,3.9 L3.9,7.8 L3.9,6.5 L1.4,3.9 Z" fill="#0c88c8"/></svg>
<div class="t" style="left:318.00px;top:165.00px;font-size:7.992000000000001px;color:#ececec;transform:scaleX(0.769);transform-origin:0 0;">/testbench/b</div>
<div class="t" style="left:381.00px;top:165.00px;font-size:7.992000000000001px;color:#ececec;transform:scaleX(0.741);transform-origin:0 0;">St1</div>
<svg style="left:308px;top:173.61999999999998px" width="7.8" height="7.8" viewBox="0 0 7.8 7.8"><path d="M3.9,0 L7.8,3.9 L3.9,7.8 L0,3.9 Z" fill="#1aa8e6"/><path d="M3.9,0 L0,3.9 L1.4,3.9 L3.9,1.3 Z" fill="#a8ecff"/><path d="M3.9,1.3 L1.4,3.9 L3.12,3.51 L4.29,1.6 Z" fill="#60d0f8"/><path d="M7.8,3.9 L3.9,7.8 L3.9,6.5 L6.4,3.9 Z" fill="#0a6aa0"/><path d="M0,3.9 L3.9,7.8 L3.9,6.5 L1.4,3.9 Z" fill="#0c88c8"/></svg>
<div class="t" style="left:318.00px;top:174.00px;font-size:7.992000000000001px;color:#ececec;transform:scaleX(0.777);transform-origin:0 0;">/testbench/c</div>
<div class="t" style="left:381.00px;top:174.00px;font-size:7.992000000000001px;color:#ececec;transform:scaleX(0.741);transform-origin:0 0;">St1</div>
<svg style="left:308px;top:182.79px" width="7.8" height="7.8" viewBox="0 0 7.8 7.8"><path d="M3.9,0 L7.8,3.9 L3.9,7.8 L0,3.9 Z" fill="#1aa8e6"/><path d="M3.9,0 L0,3.9 L1.4,3.9 L3.9,1.3 Z" fill="#a8ecff"/><path d="M3.9,1.3 L1.4,3.9 L3.12,3.51 L4.29,1.6 Z" fill="#60d0f8"/><path d="M7.8,3.9 L3.9,7.8 L3.9,6.5 L6.4,3.9 Z" fill="#0a6aa0"/><path d="M0,3.9 L3.9,7.8 L3.9,6.5 L1.4,3.9 Z" fill="#0c88c8"/></svg>
<div class="t" style="left:318.00px;top:183.00px;font-size:7.992000000000001px;color:#ececec;transform:scaleX(0.769);transform-origin:0 0;">/testbench/d</div>
<div class="t" style="left:381.00px;top:183.00px;font-size:7.992000000000001px;color:#ececec;transform:scaleX(0.741);transform-origin:0 0;">St1</div>
<svg style="left:308px;top:191.96px" width="7.8" height="7.8" viewBox="0 0 7.8 7.8"><path d="M3.9,0 L7.8,3.9 L3.9,7.8 L0,3.9 Z" fill="#1aa8e6"/><path d="M3.9,0 L0,3.9 L1.4,3.9 L3.9,1.3 Z" fill="#a8ecff"/><path d="M3.9,1.3 L1.4,3.9 L3.12,3.51 L4.29,1.6 Z" fill="#60d0f8"/><path d="M7.8,3.9 L3.9,7.8 L3.9,6.5 L6.4,3.9 Z" fill="#0a6aa0"/><path d="M0,3.9 L3.9,7.8 L3.9,6.5 L1.4,3.9 Z" fill="#0c88c8"/></svg>
<div class="t" style="left:318.00px;top:192.00px;font-size:7.992000000000001px;color:#ececec;transform:scaleX(0.769);transform-origin:0 0;">/testbench/e</div>
<div class="t" style="left:381.00px;top:192.00px;font-size:7.992000000000001px;color:#ececec;transform:scaleX(0.741);transform-origin:0 0;">St0</div>
<svg style="left:308px;top:201.13px" width="7.8" height="7.8" viewBox="0 0 7.8 7.8"><path d="M3.9,0 L7.8,3.9 L3.9,7.8 L0,3.9 Z" fill="#1aa8e6"/><path d="M3.9,0 L0,3.9 L1.4,3.9 L3.9,1.3 Z" fill="#a8ecff"/><path d="M3.9,1.3 L1.4,3.9 L3.12,3.51 L4.29,1.6 Z" fill="#60d0f8"/><path d="M7.8,3.9 L3.9,7.8 L3.9,6.5 L6.4,3.9 Z" fill="#0a6aa0"/><path d="M0,3.9 L3.9,7.8 L3.9,6.5 L1.4,3.9 Z" fill="#0c88c8"/></svg>
<div class="t" style="left:318.00px;top:202.00px;font-size:7.992000000000001px;color:#ececec;transform:scaleX(0.811);transform-origin:0 0;">/testbench/f</div>
<div class="t" style="left:381.00px;top:202.00px;font-size:7.992000000000001px;color:#ececec;transform:scaleX(0.741);transform-origin:0 0;">St1</div>
<div style="left:297px;top:210.7px;width:137px;height:8.5px;background:#fff;"></div>
<div style="left:380px;top:210.7px;width:53.5px;height:8.5px;background:#fff;"></div>
<svg style="left:308px;top:210.29999999999998px" width="7.8" height="7.8" viewBox="0 0 7.8 7.8"><path d="M3.9,0 L7.8,3.9 L3.9,7.8 L0,3.9 Z" fill="#1aa8e6"/><path d="M3.9,0 L0,3.9 L1.4,3.9 L3.9,1.3 Z" fill="#a8ecff"/><path d="M3.9,1.3 L1.4,3.9 L3.12,3.51 L4.29,1.6 Z" fill="#60d0f8"/><path d="M7.8,3.9 L3.9,7.8 L3.9,6.5 L6.4,3.9 Z" fill="#0a6aa0"/><path d="M0,3.9 L3.9,7.8 L3.9,6.5 L1.4,3.9 Z" fill="#0c88c8"/></svg>
<div class="t" style="left:318.00px;top:211.00px;font-size:7.992000000000001px;color:#222;transform:scaleX(0.769);transform-origin:0 0;">/testbench/g</div>
<div class="t" style="left:381.00px;top:211.00px;font-size:7.992000000000001px;color:#222;transform:scaleX(0.741);transform-origin:0 0;">St1</div>
<svg style="left:296.5px;top:218px" width="3" height="4" viewBox="0 0 3 4"><path d="M1.5,0 V4 M0,1.5 H3" stroke="#111" stroke-width="0.8"/></svg>
<div style="left:435.5px;top:105px;width:291.5px;height:11.2px;background:#000;"></div>
<div style="left:435.5px;top:117.2px;width:291.5px;height:179.8px;background:#000;"></div>
<div style="left:435.5px;top:116px;width:291.5px;height:1.2px;background:#f0f0f0;"></div>
<div style="left:727px;top:105px;width:1.5px;height:214px;background:#f0f0f0;"></div>
<div style="left:728.5px;top:105px;width:9px;height:11.2px;background:#8a8a8a;"></div>
<div style="left:728.5px;top:117px;width:9px;height:180px;background:#f8f8f8;border-left:1px solid #d8d8d8;"></div>
<div style="left:729.5px;top:117.5px;width:7px;height:8px;background:#f0f0f0;border:1px solid #fff;border-right-color:#909090;border-bottom-color:#909090;"></div>
<svg style="left:731px;top:120px" width="4" height="3" viewBox="0 0 4 3"><path d="M2,0 L4,2.5 H0 Z" fill="#111"/></svg>
<div style="left:729.5px;top:126px;width:7.5px;height:161px;background:#ededed;border:1px solid #f8f8f8;border-right-color:#c8c8c8;border-bottom-color:#c8c8c8;"></div>
<div style="left:730.5px;top:210px;width:5.5px;height:8px;background:#fff;"></div>
<div style="left:729.5px;top:287.5px;width:7px;height:8px;background:#f0f0f0;border:1px solid #fff;border-right-color:#909090;border-bottom-color:#909090;"></div>
<svg style="left:731px;top:290px" width="4" height="3" viewBox="0 0 4 3"><path d="M0,0 H4 L2,2.5 Z" fill="#111"/></svg>
<svg style="left:435.5px;top:117.2px" width="291.5" height="180" viewBox="0 0 291.5 180"><path d="M27.59,0 V180" stroke="#5a5a5a" stroke-width="1"/><path d="M55.28,0 V180" stroke="#5a5a5a" stroke-width="1"/><path d="M82.97,0 V180" stroke="#5a5a5a" stroke-width="1"/><path d="M110.66,0 V180" stroke="#5a5a5a" stroke-width="1"/><path d="M138.35,0 V180" stroke="#5a5a5a" stroke-width="1"/><path d="M166.04,0 V180" stroke="#5a5a5a" stroke-width="1"/><path d="M193.73,0 V180" stroke="#5a5a5a" stroke-width="1"/><path d="M221.42,0 V180" stroke="#5a5a5a" stroke-width="1"/><path d="M249.11,0 V180" stroke="#5a5a5a" stroke-width="1"/><path d="M276.80,0 V180" stroke="#5a5a5a" stroke-width="1"/><path d="M0.5,8.60 V8.60 H27.59 V8.60 H55.28 V8.60 H82.97 V8.60 H110.66 V8.60 H138.35 V8.60 H166.04 V8.60 H193.73 V8.60 H221.42 V2.10 H249.11 V2.10 H276.80" stroke="#0e9c0e" stroke-width="1.1" fill="none"/><path d="M0.5,1.10 V9.10" stroke="#50ff50" stroke-width="1"/><path d="M0.5,17.80 V17.80 H27.59 V17.80 H55.28 V17.80 H82.97 V17.80 H110.66 V11.30 H138.35 V11.30 H166.04 V11.30 H193.73 V11.30 H221.42 V17.80 H249.11 V17.80 H276.80" stroke="#0e9c0e" stroke-width="1.1" fill="none"/><path d="M0.5,10.30 V18.30" stroke="#50ff50" stroke-width="1"/><path d="M0.5,27.00 V27.00 H27.59 V27.00 H55.28 V20.50 H82.97 V20.50 H110.66 V27.00 H138.35 V27.00 H166.04 V20.50 H193.73 V20.50 H221.42 V27.00 H249.11 V27.00 H276.80" stroke="#0e9c0e" stroke-width="1.1" fill="none"/><path d="M0.5,19.50 V27.50" stroke="#50ff50" stroke-width="1"/><path d="M0.5,36.20 V36.20 H27.59 V29.70 H55.28 V36.20 H82.97 V29.70 H110.66 V36.20 H138.35 V29.70 H166.04 V36.20 H193.73 V29.70 H221.42 V36.20 H249.11 V29.70 H276.80" stroke="#0e9c0e" stroke-width="1.1" fill="none"/><path d="M0.5,28.70 V36.70" stroke="#50ff50" stroke-width="1"/><path d="M0.5,38.90 V38.90 H27.59 V45.40 H55.28 V38.90 H82.97 V38.90 H110.66 V45.40 H138.35 V38.90 H166.04 V38.90 H193.73 V38.90 H221.42 V38.90 H249.11 V38.90 H276.80" stroke="#0e9c0e" stroke-width="1.1" fill="none"/><path d="M0.5,37.90 V45.90" stroke="#50ff50" stroke-width="1"/><path d="M0.5,48.10 V48.10 H27.59 V48.10 H55.28 V48.10 H82.97 V48.10 H110.66 V48.10 H138.35 V54.60 H166.04 V54.60 H193.73 V48.10 H221.42 V48.10 H249.11 V48.10 H276.80" stroke="#0e9c0e" stroke-width="1.1" fill="none"/><path d="M0.5,47.10 V55.10" stroke="#50ff50" stroke-width="1"/><path d="M0.5,57.30 V57.30 H27.59 V57.30 H55.28 V63.80 H82.97 V57.30 H110.66 V57.30 H138.35 V57.30 H166.04 V57.30 H193.73 V57.30 H221.42 V57.30 H249.11 V57.30 H276.80" stroke="#0e9c0e" stroke-width="1.1" fill="none"/><path d="M0.5,56.30 V64.30" stroke="#50ff50" stroke-width="1"/><path d="M0.5,66.50 V66.50 H27.59 V73.00 H55.28 V66.50 H82.97 V66.50 H110.66 V73.00 H138.35 V66.50 H166.04 V66.50 H193.73 V73.00 H221.42 V66.50 H249.11 V66.50 H276.80" stroke="#0e9c0e" stroke-width="1.1" fill="none"/><path d="M0.5,65.50 V73.50" stroke="#50ff50" stroke-width="1"/><path d="M0.5,75.70 V75.70 H27.59 V82.20 H55.28 V75.70 H82.97 V82.20 H110.66 V82.20 H138.35 V82.20 H166.04 V75.70 H193.73 V82.20 H221.42 V75.70 H249.11 V82.20 H276.80" stroke="#0e9c0e" stroke-width="1.1" fill="none"/><path d="M0.5,74.70 V82.70" stroke="#50ff50" stroke-width="1"/><path d="M0.5,84.90 V84.90 H27.59 V91.40 H55.28 V91.40 H82.97 V91.40 H110.66 V84.90 H138.35 V84.90 H166.04 V84.90 H193.73 V91.40 H221.42 V84.90 H249.11 V84.90 H276.80" stroke="#0e9c0e" stroke-width="1.1" fill="none"/><path d="M0.5,83.90 V91.90" stroke="#50ff50" stroke-width="1"/><path d="M0.5,100.60 V100.60 H27.59 V100.60 H55.28 V94.10 H82.97 V94.10 H110.66 V94.10 H138.35 V94.10 H166.04 V94.10 H193.73 V100.60 H221.42 V94.10 H249.11 V94.10 H276.80" stroke="#0e9c0e" stroke-width="1.1" fill="none"/><path d="M0.5,93.10 V101.10" stroke="#50ff50" stroke-width="1"/><path d="M267.39,0 V180" stroke="#f0e020" stroke-width="1.6"/></svg>
<svg style="left:435.5px;top:105px" width="291.5" height="11.2" viewBox="0 0 291.5 11.2"><path d="M267.39,0 V11.2" stroke="#f0e020" stroke-width="1.6"/></svg>
<div style="left:292.5px;top:297px;width:435px;height:1.2px;background:#f4f4f4;"></div>
<div style="left:435.5px;top:298.2px;width:291.5px;height:11.2px;background:#000;"></div>
<div style="left:435.5px;top:309.5px;width:291.5px;height:9.5px;background:#000;"></div>
<div style="left:435.5px;top:309.2px;width:291.5px;height:0.6px;background:#2a2a2a;"></div>
<svg style="left:435.5px;top:298.2px" width="291.5" height="21" viewBox="0 0 291.5 21"><path d="M-0.10,1.5 V4.5" stroke="#20b020" stroke-width="0.9"/><path d="M6.82,2.5 V3.8" stroke="#20b020" stroke-width="0.9"/><path d="M13.75,2.5 V3.8" stroke="#20b020" stroke-width="0.9"/><path d="M20.67,2.5 V3.8" stroke="#20b020" stroke-width="0.9"/><path d="M27.59,2.5 V3.8" stroke="#20b020" stroke-width="0.9"/><path d="M34.51,1.5 V4.5" stroke="#20b020" stroke-width="0.9"/><path d="M41.43,2.5 V3.8" stroke="#20b020" stroke-width="0.9"/><path d="M48.36,2.5 V3.8" stroke="#20b020" stroke-width="0.9"/><path d="M55.28,2.5 V3.8" stroke="#20b020" stroke-width="0.9"/><path d="M62.20,2.5 V3.8" stroke="#20b020" stroke-width="0.9"/><path d="M69.12,1.5 V4.5" stroke="#20b020" stroke-width="0.9"/><path d="M76.05,2.5 V3.8" stroke="#20b020" stroke-width="0.9"/><path d="M82.97,2.5 V3.8" stroke="#20b020" stroke-width="0.9"/><path d="M89.89,2.5 V3.8" stroke="#20b020" stroke-width="0.9"/><path d="M96.81,2.5 V3.8" stroke="#20b020" stroke-width="0.9"/><path d="M103.74,1.5 V4.5" stroke="#20b020" stroke-width="0.9"/><path d="M110.66,2.5 V3.8" stroke="#20b020" stroke-width="0.9"/><path d="M117.58,2.5 V3.8" stroke="#20b020" stroke-width="0.9"/><path d="M124.50,2.5 V3.8" stroke="#20b020" stroke-width="0.9"/><path d="M131.43,2.5 V3.8" stroke="#20b020" stroke-width="0.9"/><path d="M138.35,1.5 V4.5" stroke="#20b020" stroke-width="0.9"/><path d="M145.27,2.5 V3.8" stroke="#20b020" stroke-width="0.9"/><path d="M152.19,2.5 V3.8" stroke="#20b020" stroke-width="0.9"/><path d="M159.12,2.5 V3.8" stroke="#20b020" stroke-width="0.9"/><path d="M166.04,2.5 V3.8" stroke="#20b020" stroke-width="0.9"/><path d="M172.96,1.5 V4.5" stroke="#20b020" stroke-width="0.9"/><path d="M179.88,2.5 V3.8" stroke="#20b020" stroke-width="0.9"/><path d="M186.81,2.5 V3.8" stroke="#20b020" stroke-width="0.9"/><path d="M193.73,2.5 V3.8" stroke="#20b020" stroke-width="0.9"/><path d="M200.65,2.5 V3.8" stroke="#20b020" stroke-width="0.9"/><path d="M207.57,1.5 V4.5" stroke="#20b020" stroke-width="0.9"/><path d="M214.50,2.5 V3.8" stroke="#20b020" stroke-width="0.9"/><path d="M221.42,2.5 V3.8" stroke="#20b020" stroke-width="0.9"/><path d="M228.34,2.5 V3.8" stroke="#20b020" stroke-width="0.9"/><path d="M235.26,2.5 V3.8" stroke="#20b020" stroke-width="0.9"/><path d="M242.19,1.5 V4.5" stroke="#20b020" stroke-width="0.9"/><path d="M249.11,2.5 V3.8" stroke="#20b020" stroke-width="0.9"/><path d="M256.03,2.5 V3.8" stroke="#20b020" stroke-width="0.9"/><path d="M262.95,2.5 V3.8" stroke="#20b020" stroke-width="0.9"/><path d="M269.88,2.5 V3.8" stroke="#20b020" stroke-width="0.9"/><path d="M276.80,1.5 V4.5" stroke="#20b020" stroke-width="0.9"/><path d="M283.72,2.5 V3.8" stroke="#20b020" stroke-width="0.9"/><path d="M290.64,2.5 V3.8" stroke="#20b020" stroke-width="0.9"/><path d="M267.39,0 V12.3" stroke="#f0e020" stroke-width="1.6"/></svg>
<div class="t" style="left:495.98px;top:303.00px;font-size:7.776000000000001px;color:#28c028;transform:scaleX(0.741);transform-origin:0 0;">500 ns</div>
<div class="t" style="left:563.60px;top:303.00px;font-size:7.776000000000001px;color:#28c028;transform:scaleX(0.741);transform-origin:0 0;">1000 ns</div>
<div class="t" style="left:632.83px;top:303.00px;font-size:7.776000000000001px;color:#28c028;transform:scaleX(0.741);transform-origin:0 0;">1500 ns</div>
<div class="t" style="left:702.05px;top:303.00px;font-size:7.776000000000001px;color:#28c028;transform:scaleX(0.741);transform-origin:0 0;">2000 ns</div>
<div class="t" style="left:436.20px;top:303.00px;font-size:7.776000000000001px;color:#28c028;transform:scaleX(0.645);transform-origin:0 0;">ns</div>
<div style="left:691.5px;top:310.7px;width:24px;height:8.3px;background:#000;border:1px solid #c09a10;"></div>
<div class="t" style="left:693.00px;top:313.00px;font-size:7.128px;color:#e0c040;transform:scaleX(0.828);transform-origin:0 0;">1932 ns</div>
<svg style="left:297px;top:300px" width="20" height="8" viewBox="0 0 20 8"><path d="M1,7 L4,3 M3,1 L5.5,3.5" stroke="#444" stroke-width="1"/><path d="M0,7.5 H6" stroke="#3a6ad0" stroke-width="1"/><rect x="6.5" y="1" width="6" height="6.5" fill="#9ab8e8" stroke="#5a7ab0" stroke-width="0.7"/><circle cx="16.3" cy="4.3" r="3.3" fill="#40b040"/><path d="M14.8,4.3 H17.8" stroke="#dfd" stroke-width="0.8"/></svg>
<div class="t" style="left:361.16px;top:301.00px;font-size:7.992000000000001px;color:#e4e4e4;transform:scaleX(0.741);transform-origin:0 0;">Now</div>
<div class="t" style="left:407.93px;top:301.00px;font-size:7.992000000000001px;color:#e4e4e4;transform:scaleX(0.741);transform-origin:0 0;">2000 ns</div>
<svg style="left:299px;top:311px" width="20" height="8" viewBox="0 0 20 8"><rect x="0.5" y="3.5" width="5" height="4" fill="#f0c040" stroke="#a08020" stroke-width="0.6"/><path d="M1.5,3.5 V2 A1.5,1.5 0 0 1 4.5,2 V3.5" stroke="#777" fill="none" stroke-width="0.8"/><path d="M7,7 L11,3" stroke="#3a6ad0" stroke-width="1.4"/><circle cx="11" cy="2.5" r="1.4" fill="none" stroke="#888" stroke-width="0.7"/><circle cx="16.3" cy="4.3" r="3.3" fill="#e03030"/><path d="M14.8,4.3 H17.8" stroke="#fdd" stroke-width="0.9"/></svg>
<div style="left:318.8px;top:310px;width:59.7px;height:8.6px;background:#fff;"></div>
<div style="left:380px;top:310px;width:54px;height:8.6px;background:#fff;"></div>
<div class="t" style="left:350.30px;top:311.00px;font-size:7.992000000000001px;color:#222;transform:scaleX(0.741);transform-origin:0 0;">Cursor 1</div>
<div class="t" style="left:407.93px;top:311.00px;font-size:7.992000000000001px;color:#222;transform:scaleX(0.741);transform-origin:0 0;">1932 ns</div>
<div style="left:292.5px;top:318.6px;width:435px;height:1.4px;background:#a0a0a0;"></div>
<div style="left:292.5px;top:320px;width:445px;height:0.8px;background:#f8f8f8;"></div>
<div style="left:297px;top:321px;width:81.5px;height:9px;background:#f4f4f4;"></div>
<div style="left:297px;top:321px;width:8.5px;height:9px;background:#f0f0f0;border:1px solid #fff;border-right-color:#909090;border-bottom-color:#909090;"></div>
<svg style="left:300px;top:323.5px" width="3" height="4" viewBox="0 0 3 4"><path d="M3,0 V4 L0,2 Z" fill="#111"/></svg>
<div style="left:370.0px;top:321px;width:8.5px;height:9px;background:#f0f0f0;border:1px solid #fff;border-right-color:#909090;border-bottom-color:#909090;"></div>
<svg style="left:373.0px;top:323.5px" width="3" height="4" viewBox="0 0 3 4"><path d="M0,0 V4 L3,2 Z" fill="#111"/></svg>
<div style="left:305.5px;top:321px;width:64.5px;height:9px;background:#ececec;border:1px solid #fff;border-right-color:#a0a0a0;border-bottom-color:#a0a0a0;"></div>
<div style="left:380px;top:321px;width:54px;height:9px;background:#f4f4f4;"></div>
<div style="left:380px;top:321px;width:8.5px;height:9px;background:#f0f0f0;border:1px solid #fff;border-right-color:#909090;border-bottom-color:#909090;"></div>
<svg style="left:383px;top:323.5px" width="3" height="4" viewBox="0 0 3 4"><path d="M3,0 V4 L0,2 Z" fill="#111"/></svg>
<div style="left:425.5px;top:321px;width:8.5px;height:9px;background:#f0f0f0;border:1px solid #fff;border-right-color:#909090;border-bottom-color:#909090;"></div>
<svg style="left:428.5px;top:323.5px" width="3" height="4" viewBox="0 0 3 4"><path d="M0,0 V4 L3,2 Z" fill="#111"/></svg>
<div style="left:388.5px;top:321px;width:37.0px;height:9px;background:#ececec;border:1px solid #fff;border-right-color:#a0a0a0;border-bottom-color:#a0a0a0;"></div>
<div style="left:435.5px;top:321px;width:291.5px;height:9px;background:#f4f4f4;"></div>
<div style="left:435.5px;top:321px;width:8.5px;height:9px;background:#f0f0f0;border:1px solid #fff;border-right-color:#909090;border-bottom-color:#909090;"></div>
<svg style="left:438px;top:323.5px" width="3" height="4" viewBox="0 0 3 4"><path d="M3,0 V4 L0,2 Z" fill="#111"/></svg>
<div style="left:444px;top:321px;width:274px;height:9px;background:#f4f4f4;border:1px solid #fff;border-right-color:#a8a8a8;border-bottom-color:#a8a8a8;"></div>
<div style="left:718.5px;top:321px;width:8.5px;height:9px;background:#f0f0f0;border:1px solid #fff;border-right-color:#909090;border-bottom-color:#909090;"></div>
<svg style="left:721.5px;top:323.5px" width="3" height="4" viewBox="0 0 3 4"><path d="M0,0 V4 L3,2 Z" fill="#111"/></svg>
<div style="left:694.5px;top:322px;width:1px;height:7px;background:#e8d040;"></div>
<div style="left:292px;top:321px;width:5px;height:9px;background:#808080;"></div>
<div style="left:728.5px;top:298px;width:9px;height:32px;background:#8a8a8a;"></div>
<div style="left:727px;top:298px;width:1.5px;height:33px;background:#d8d8d8;"></div>
<div style="left:292px;top:330px;width:446px;height:1px;background:#b0b0b0;"></div>
<div style="left:737.5px;top:92px;width:2.5px;height:240px;background:#e8e8e8;"></div>
<div style="left:288px;top:331px;width:452px;height:16px;background:#f0f0f0;"></div>
<div style="left:290px;top:332.5px;width:448px;height:1px;background:#a8a8a8;"></div>
<div style="left:290px;top:332.5px;width:39px;height:12.5px;background:linear-gradient(#fcfcfc,#f0f0f0);border:1px solid #777;border-top:none;border-radius:0 0 2px 2px;"></div>
<svg style="left:293px;top:335px" width="8" height="8" viewBox="0 0 8 8"><rect x="0" y="0" width="8" height="8" fill="#0a1a10" stroke="#6a8aa0" stroke-width="0.6"/><path d="M1.5,6.5 V2 H4 V5 H6.5 V2" stroke="#20e0a0" stroke-width="0.9" fill="none"/><rect x="0" y="0" width="8" height="1.5" fill="#5a7a90"/></svg>
<div class="t" style="left:303.00px;top:336.00px;font-size:8.208px;color:#222;transform:scaleX(0.741);transform-origin:0 0;">Wave</div>
<div class="t" style="left:321.50px;top:338.00px;font-size:5.94px;color:#a8a8a8;transform:scaleX(1.000);transform-origin:0 0;">✕</div>
<div style="left:330px;top:333.5px;width:38px;height:11.5px;background:linear-gradient(#e4e4e4,#d4d4d4);border:1px solid #8a8a8a;border-top:none;border-radius:0 0 2px 2px;"></div>
<svg style="left:333px;top:335px" width="7" height="9" viewBox="0 0 7 9"><path d="M0.5,0.5 H4.5 L6.5,2.5 V8.5 H0.5 Z" fill="#fff" stroke="#8a8a8a" stroke-width="0.8"/></svg>
<div class="t" style="left:343.00px;top:336.00px;font-size:8.208px;color:#222;transform:scaleX(0.741);transform-origin:0 0;">ss2.v</div>
<div class="t" style="left:360.50px;top:338.00px;font-size:5.94px;color:#a8a8a8;transform:scaleX(1.000);transform-origin:0 0;">✕</div>
<div style="left:369px;top:333.5px;width:37px;height:11.5px;background:linear-gradient(#e4e4e4,#d4d4d4);border:1px solid #8a8a8a;border-top:none;border-radius:0 0 2px 2px;"></div>
<svg style="left:372px;top:335px" width="7" height="9" viewBox="0 0 7 9"><path d="M0.5,0.5 H4.5 L6.5,2.5 V8.5 H0.5 Z" fill="#fff" stroke="#8a8a8a" stroke-width="0.8"/></svg>
<div class="t" style="left:382.00px;top:336.00px;font-size:8.208px;color:#222;transform:scaleX(0.741);transform-origin:0 0;">ss3.v</div>
<div class="t" style="left:398.50px;top:338.00px;font-size:5.94px;color:#a8a8a8;transform:scaleX(1.000);transform-origin:0 0;">✕</div>
<div style="left:407px;top:333.5px;width:36px;height:11.5px;background:linear-gradient(#e4e4e4,#d4d4d4);border:1px solid #8a8a8a;border-top:none;border-radius:0 0 2px 2px;"></div>
<svg style="left:410px;top:335px" width="7" height="9" viewBox="0 0 7 9"><path d="M0.5,0.5 H4.5 L6.5,2.5 V8.5 H0.5 Z" fill="#fff" stroke="#8a8a8a" stroke-width="0.8"/></svg>
<div class="t" style="left:420.00px;top:336.00px;font-size:8.208px;color:#222;transform:scaleX(0.741);transform-origin:0 0;">ss4.v</div>
<div class="t" style="left:435.50px;top:338.00px;font-size:5.94px;color:#a8a8a8;transform:scaleX(1.000);transform-origin:0 0;">✕</div>
<div style="left:444px;top:333.5px;width:36px;height:11.5px;background:linear-gradient(#e4e4e4,#d4d4d4);border:1px solid #8a8a8a;border-top:none;border-radius:0 0 2px 2px;"></div>
<svg style="left:447px;top:335px" width="7" height="9" viewBox="0 0 7 9"><path d="M0.5,0.5 H4.5 L6.5,2.5 V8.5 H0.5 Z" fill="#fff" stroke="#8a8a8a" stroke-width="0.8"/></svg>
<div class="t" style="left:457.00px;top:336.00px;font-size:8.208px;color:#222;transform:scaleX(0.741);transform-origin:0 0;">ss5.v</div>
<div class="t" style="left:472.50px;top:338.00px;font-size:5.94px;color:#a8a8a8;transform:scaleX(1.000);transform-origin:0 0;">✕</div>
<div style="left:481px;top:333.5px;width:37px;height:11.5px;background:linear-gradient(#e4e4e4,#d4d4d4);border:1px solid #8a8a8a;border-top:none;border-radius:0 0 2px 2px;"></div>
<svg style="left:484px;top:335px" width="7" height="9" viewBox="0 0 7 9"><path d="M0.5,0.5 H4.5 L6.5,2.5 V8.5 H0.5 Z" fill="#fff" stroke="#8a8a8a" stroke-width="0.8"/></svg>
<div class="t" style="left:494.00px;top:336.00px;font-size:8.208px;color:#222;transform:scaleX(0.741);transform-origin:0 0;">ss6.v</div>
<div class="t" style="left:510.50px;top:338.00px;font-size:5.94px;color:#a8a8a8;transform:scaleX(1.000);transform-origin:0 0;">✕</div>
<div style="left:519px;top:333.5px;width:37px;height:11.5px;background:linear-gradient(#e4e4e4,#d4d4d4);border:1px solid #8a8a8a;border-top:none;border-radius:0 0 2px 2px;"></div>
<svg style="left:522px;top:335px" width="7" height="9" viewBox="0 0 7 9"><path d="M0.5,0.5 H4.5 L6.5,2.5 V8.5 H0.5 Z" fill="#fff" stroke="#8a8a8a" stroke-width="0.8"/></svg>
<div class="t" style="left:532.00px;top:336.00px;font-size:8.208px;color:#222;transform:scaleX(0.741);transform-origin:0 0;">ss7.v</div>
<div class="t" style="left:548.50px;top:338.00px;font-size:5.94px;color:#a8a8a8;transform:scaleX(1.000);transform-origin:0 0;">✕</div>
<div style="left:557px;top:333.5px;width:54px;height:11.5px;background:linear-gradient(#e4e4e4,#d4d4d4);border:1px solid #8a8a8a;border-top:none;border-radius:0 0 2px 2px;"></div>
<svg style="left:560px;top:335px" width="7" height="9" viewBox="0 0 7 9"><path d="M0.5,0.5 H4.5 L6.5,2.5 V8.5 H0.5 Z" fill="#fff" stroke="#8a8a8a" stroke-width="0.8"/></svg>
<div class="t" style="left:570.00px;top:336.00px;font-size:8.208px;color:#222;transform:scaleX(0.741);transform-origin:0 0;">testbench.v</div>
<div class="t" style="left:603.50px;top:338.00px;font-size:5.94px;color:#a8a8a8;transform:scaleX(1.000);transform-origin:0 0;">✕</div>
<div style="left:612px;top:333.5px;width:38px;height:11.5px;background:linear-gradient(#e4e4e4,#d4d4d4);border:1px solid #8a8a8a;border-top:none;border-radius:0 0 2px 2px;"></div>
<svg style="left:615px;top:335px" width="7" height="9" viewBox="0 0 7 9"><path d="M0.5,0.5 H4.5 L6.5,2.5 V8.5 H0.5 Z" fill="#fff" stroke="#8a8a8a" stroke-width="0.8"/></svg>
<div class="t" style="left:625.00px;top:336.00px;font-size:8.208px;color:#222;transform:scaleX(0.741);transform-origin:0 0;">ss1.v</div>
<div class="t" style="left:642.50px;top:338.00px;font-size:5.94px;color:#a8a8a8;transform:scaleX(1.000);transform-origin:0 0;">✕</div>
<div style="left:651px;top:333.5px;width:78px;height:9px;background:#f2f2f2;"></div>
<div style="left:730px;top:334px;width:5px;height:9px;background:#f0f0f0;border:1px solid #c0c0c0;"></div>
<svg style="left:731.5px;top:336.5px" width="3" height="4" viewBox="0 0 3 4"><path d="M3,0 V4 L0,2 Z" fill="#333"/></svg>
<div style="left:735px;top:334px;width:5px;height:9px;background:#f0f0f0;border:1px solid #c0c0c0;"></div>
<svg style="left:736px;top:336.5px" width="3" height="4" viewBox="0 0 3 4"><path d="M0,0 V4 L3,2 Z" fill="#333"/></svg>
<div style="left:0px;top:345px;width:740px;height:58px;background:#f0f0f0;"></div>
<div style="left:0px;top:347.5px;width:740px;height:1px;background:#dcdcdc;"></div>
<svg style="left:2.5px;top:351px" width="6.5" height="8" viewBox="0 0 6.5 8"><path d="M0.8,7.5 V3 A2.5,2.5 0 0 1 5.8,3 V7.5" stroke="#555" stroke-width="1.3" fill="none"/><rect x="0" y="3.5" width="1.6" height="4" fill="#666"/><rect x="4.9" y="3.5" width="1.6" height="4" fill="#666"/></svg>
<div class="t" style="left:11.50px;top:352.00px;font-size:7.992000000000001px;color:#333;transform:scaleX(0.738);transform-origin:0 0;">Transcript</div>
<svg style="left:40px;top:352.5px" width="674" height="5" viewBox="0 0 674 5"><path d="M0,0.5 H674 M0,3.5 H674" stroke="#a8a8a8" stroke-width="1"/><path d="M0,1.5 H674 M0,4.5 H674" stroke="#fff" stroke-width="1"/></svg>
<svg style="left:378px;top:352.5px" width="9" height="5" viewBox="0 0 9 5"><path d="M0,1 H9 M0,3 H9" stroke="#c8c8c8" stroke-width="1" stroke-dasharray="1,1"/></svg>
<svg style="left:716px;top:351.5px" width="22" height="7" viewBox="0 0 22 7"><path d="M2.5,1 V6 M0,3.5 H5" stroke="#222" stroke-width="1.15"/><rect x="8.2" y="2.8" width="3" height="3.2" fill="none" stroke="#222" stroke-width="1"/><path d="M10,4 L12.5,1.5" stroke="#222" stroke-width="0.9"/><path d="M11,0.8 H13 V2.8 Z" fill="#222"/><path d="M16,1.5 L20.5,6 M20.5,1.5 L16,6" stroke="#222" stroke-width="0.95"/></svg>
<div style="left:1.5px;top:359.5px;width:736px;height:42px;background:#fff;border-top:1.5px solid #8a8a8a;border-left:1.5px solid #8a8a8a;"></div>
<div class="m" style="left:4.00px;top:364.00px;font-size:9px;color:#333;transform:scaleX(1.000);transform-origin:0 0;">sim:/testbench/g</div>
<div class="t" style="left:3.50px;top:374.00px;font-size:6.48px;color:#3a3aa8;transform:scaleX(0.906);transform-origin:0 0;">VSIM 11&gt;</div>
<div class="m" style="left:32.00px;top:373.00px;font-size:9px;color:#333;transform:scaleX(1.000);transform-origin:0 0;">run -all</div>
<div class="t" style="left:3.50px;top:393.00px;font-size:6.48px;color:#3a3aa8;transform:scaleX(0.891);transform-origin:0 0;">VSIM 12&gt;</div>
<div style="left:729px;top:361px;width:8.5px;height:40px;background:#f6f6f6;border-left:1px solid #e0e0e0;"></div>
<div style="left:729.5px;top:361px;width:7.5px;height:7.5px;background:#f0f0f0;border:1px solid #fff;border-right-color:#909090;border-bottom-color:#909090;"></div>
<svg style="left:731.3px;top:363.5px" width="4" height="3" viewBox="0 0 4 3"><path d="M2,0 L4,2.5 H0 Z" fill="#111"/></svg>
<div style="left:729.5px;top:388.5px;width:7.5px;height:5.5px;background:#eaeaea;border:1px solid #fff;border-right-color:#a0a0a0;border-bottom-color:#a0a0a0;"></div>
<div style="left:729.5px;top:394px;width:7.5px;height:7.5px;background:#f0f0f0;border:1px solid #fff;border-right-color:#909090;border-bottom-color:#909090;"></div>
<svg style="left:731.3px;top:396.5px" width="4" height="3" viewBox="0 0 4 3"><path d="M0,0 H4 L2,2.5 Z" fill="#111"/></svg>
<div style="left:0px;top:401.5px;width:740px;height:1.5px;background:#b4b4b4;"></div>
<div style="left:0px;top:403px;width:740px;height:13px;background:#f0f0f0;"></div>
<div style="left:2px;top:404px;width:91px;height:12px;border:1px solid #fff;border-top-color:#a8a8a8;border-left-color:#a8a8a8;"></div>
<div style="left:96px;top:404px;width:74px;height:12px;border:1px solid #fff;border-top-color:#a8a8a8;border-left-color:#a8a8a8;"></div>
<div style="left:171px;top:404px;width:107px;height:12px;border:1px solid #fff;border-top-color:#a8a8a8;border-left-color:#a8a8a8;"></div>
<div style="left:280px;top:404px;width:460px;height:12px;border:1px solid #fff;border-top-color:#a8a8a8;border-left-color:#a8a8a8;"></div>
<div class="t" style="left:5.00px;top:406.00px;font-size:7.884px;color:#222;transform:scaleX(0.742);transform-origin:0 0;">0 ns to 2100 ns</div>
<div class="t" style="left:97.50px;top:406.00px;font-size:7.884px;color:#222;transform:scaleX(0.746);transform-origin:0 0;">Project : Seven_Segment2</div>
<div class="t" style="left:173.00px;top:406.00px;font-size:7.884px;color:#222;transform:scaleX(0.856);transform-origin:0 0;">Now: 2 us</div>
<div class="t" style="left:208.00px;top:406.00px;font-size:7.884px;color:#222;transform:scaleX(0.662);transform-origin:0 0;">Delta: 1</div>
<div class="t" style="left:282.00px;top:406.00px;font-size:7.884px;color:#222;transform:scaleX(0.694);transform-origin:0 0;">sim:/testbench/#INITIAL#8</div>
<svg style="left:731px;top:408px" width="8" height="8" viewBox="0 0 8 8"><path d="M7,1 L1,7 M7,4 L4,7" stroke="#a8a8a8" stroke-width="0.9"/></svg>
</body></html>
